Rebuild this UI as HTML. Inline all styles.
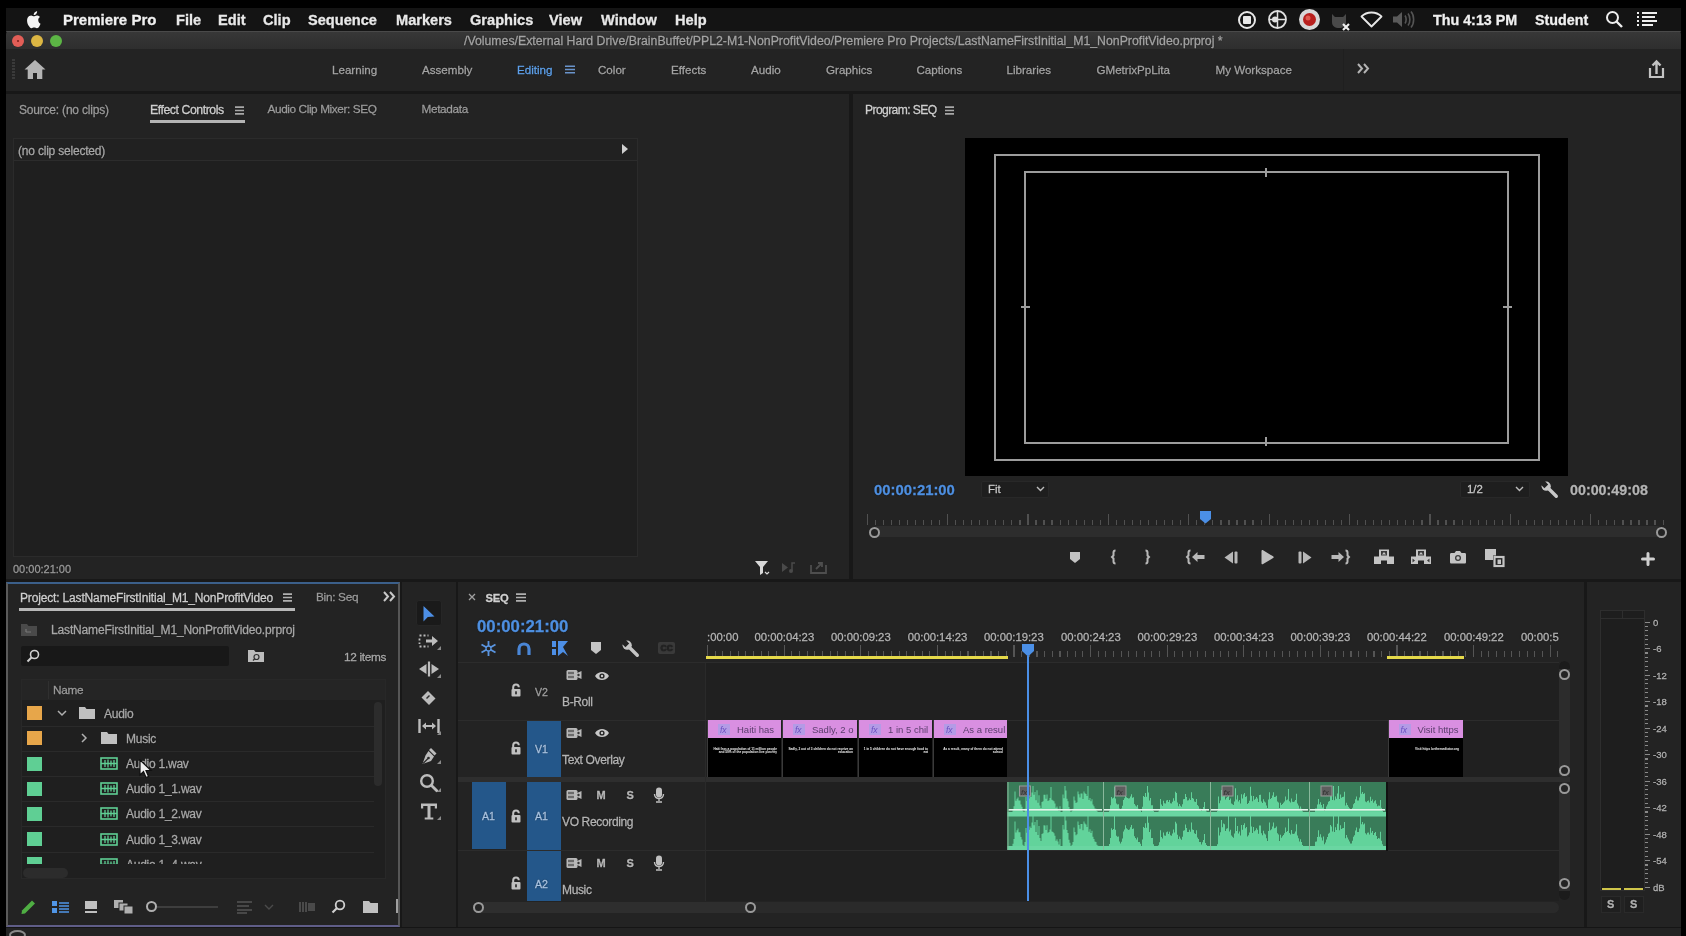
<!DOCTYPE html>
<html><head><meta charset="utf-8">
<style>
*{margin:0;padding:0;box-sizing:border-box}
html,body{width:1686px;height:936px;overflow:hidden;background:#000;font-family:"Liberation Sans",sans-serif;color:#a8a8a8}
#root{position:absolute;left:0;top:0;width:1686px;height:936px;will-change:transform}
.a{position:absolute;white-space:nowrap}
.t{line-height:1;-webkit-text-stroke:0.3px currentColor;text-shadow:0 0 1.2px rgba(0,0,0,.9)}
.p{-webkit-text-stroke:0.25px currentColor;letter-spacing:-0.35px}
</style></head><body><div id="root">
<div class="a" style="left:6px;top:8px;width:1675px;height:23px;background:#141414;"></div>
<div class="a" style="left:6px;top:31px;width:1675px;height:905px;background:#181818;"></div>
<div class="a" style="left:6px;top:31px;width:1675px;height:18px;background:linear-gradient(#383838,#2e2e2e);border-radius:4px 4px 0 0"></div>
<div class="a" style="left:6px;top:31px;width:1675px;height:1px;background:#4a4a4a;border-radius:4px 4px 0 0"></div>
<div class="a" style="left:6px;top:49px;width:1675px;height:42px;background:#232323;"></div>
<div class="a" style="left:6px;top:94px;width:843px;height:485px;background:#232323;"></div>
<div class="a" style="left:853px;top:94px;width:828px;height:485px;background:#232323;"></div>
<div class="a" style="left:6px;top:582px;width:394px;height:345px;background:#232323;"></div>
<div class="a" style="left:402px;top:582px;width:54px;height:345px;background:#232323;"></div>
<div class="a" style="left:458px;top:582px;width:1126px;height:345px;background:#232323;"></div>
<div class="a" style="left:1587px;top:582px;width:94px;height:345px;background:#232323;"></div>
<div class="a" style="left:6px;top:927px;width:1675px;height:9px;background:#232323;"></div>
<div class="a" style="left:6px;top:927px;width:1675px;height:1px;background:#151515;"></div>
<div class="a" style="left:9px;top:930px;width:17px;height:10px;background:transparent;border-radius:50%;border:2px solid #8a8a8a"></div>
<svg class="a" style="left:26px;top:10px" width="17" height="19" viewBox="0 0 17 19"><path fill="#f2f2f2" d="M12.2 10.1c0-2 1.7-3 1.8-3.1-1-1.4-2.5-1.6-3-1.6-1.3-.1-2.5.8-3.1.8-.7 0-1.6-.8-2.7-.8C3.8 5.4 2.5 6.2 1.8 7.5.3 10.1 1.4 14 2.9 16.1c.7 1 1.5 2.2 2.6 2.1 1 0 1.4-.7 2.7-.7 1.2 0 1.6.7 2.7.7 1.1 0 1.8-1 2.5-2 .8-1.2 1.1-2.3 1.1-2.4 0 0-2.3-.9-2.3-3.7zM10.2 3.9c.6-.7 1-1.7.9-2.7-.8 0-1.9.6-2.5 1.3-.5.6-1 1.6-.9 2.6.9.1 1.9-.5 2.5-1.2z"/></svg>
<div class="a t" style="left:63px;top:12px;font-size:15px;color:#f0f0f0;font-weight:bold">Premiere Pro</div>
<div class="a t" style="left:176px;top:12.5px;font-size:14.6px;color:#e8e8e8;font-weight:bold">File</div>
<div class="a t" style="left:218px;top:12.5px;font-size:14.6px;color:#e8e8e8;font-weight:bold">Edit</div>
<div class="a t" style="left:263px;top:12.5px;font-size:14.6px;color:#e8e8e8;font-weight:bold">Clip</div>
<div class="a t" style="left:308px;top:12.5px;font-size:14.6px;color:#e8e8e8;font-weight:bold">Sequence</div>
<div class="a t" style="left:396px;top:12.5px;font-size:14.6px;color:#e8e8e8;font-weight:bold">Markers</div>
<div class="a t" style="left:470px;top:12.5px;font-size:14.6px;color:#e8e8e8;font-weight:bold">Graphics</div>
<div class="a t" style="left:549px;top:12.5px;font-size:14.6px;color:#e8e8e8;font-weight:bold">View</div>
<div class="a t" style="left:601px;top:12.5px;font-size:14.6px;color:#e8e8e8;font-weight:bold">Window</div>
<div class="a t" style="left:675px;top:12.5px;font-size:14.6px;color:#e8e8e8;font-weight:bold">Help</div>
<svg class="a" style="left:1237px;top:10px" width="20" height="20" viewBox="0 0 20 20"><circle cx="10" cy="10" r="8" fill="none" stroke="#e8e8e8" stroke-width="2"/><rect x="6" y="6" width="8" height="8" rx="1" fill="#e8e8e8"/></svg>
<svg class="a" style="left:1267px;top:9px" width="21" height="21" viewBox="0 0 21 21"><circle cx="10.5" cy="10.5" r="8.5" fill="none" stroke="#e0e0e0" stroke-width="1.8"/><path d="M10.5 2v17M2 10.5h17" stroke="#e0e0e0" stroke-width="1.5"/><circle cx="8" cy="10.5" r="3" fill="#e0e0e0"/></svg>
<svg class="a" style="left:1298px;top:8px" width="23" height="23" viewBox="0 0 23 23"><circle cx="11.5" cy="11.5" r="10.5" fill="#d8d8d8"/><circle cx="11.5" cy="11.5" r="6.5" fill="#b8201e"/><circle cx="10" cy="10" r="2.5" fill="#e05a50"/></svg>
<svg class="a" style="left:1330px;top:10px" width="22" height="22" viewBox="0 0 22 22"><path d="M2 4l3 3h8l3-3v8c0 4-3 6-7 6s-7-2-7-6z" fill="#4a4a4a"/><path d="M13 14l6 6M19 14l-6 6" stroke="#f0f0f0" stroke-width="2.2"/></svg>
<svg class="a" style="left:1360px;top:11px" width="23" height="17" viewBox="0 0 23 17"><path d="M11.5 15.5L1.5 5.5C4 3 7.5 1.5 11.5 1.5s7.5 1.5 10 4z" fill="none" stroke="#e8e8e8" stroke-width="1.8" stroke-linejoin="round"/></svg>
<svg class="a" style="left:1391px;top:10px" width="26" height="19" viewBox="0 0 26 19"><path d="M2 6.5h4l5-4.5v15l-5-4.5H2z" fill="#5a5a5a"/><path d="M14 5.5c1.5 2 1.5 6 0 8M17 3.5c2.5 3 2.5 9 0 12M20 1.5c3.5 4 3.5 12 0 16" fill="none" stroke="#555" stroke-width="1.6"/></svg>
<div class="a t" style="left:1433px;top:12.5px;font-size:14.3px;color:#f0f0f0;font-weight:bold">Thu 4:13 PM</div>
<div class="a t" style="left:1535px;top:12.5px;font-size:14.3px;color:#f0f0f0;font-weight:bold">Student</div>
<svg class="a" style="left:1605px;top:10px" width="19" height="19" viewBox="0 0 19 19"><circle cx="7.5" cy="7.5" r="5.5" fill="none" stroke="#eee" stroke-width="2"/><path d="M11.5 11.5l5.5 5.5" stroke="#eee" stroke-width="2.4"/></svg>
<svg class="a" style="left:1636px;top:11px" width="22" height="16" viewBox="0 0 22 16"><path d="M1 2h2M6 2h15M1 6h2M6 6h13M1 10h2M6 10h15M1 14h2M6 14h11" stroke="#eee" stroke-width="2.2"/></svg>
<div class="a" style="left:12px;top:34.5px;width:12px;height:12px;background:#e25e57;border-radius:50%"></div>
<div class="a" style="left:17px;top:39.5px;width:2px;height:2px;background:#7a1d18;border-radius:50%"></div>
<div class="a" style="left:31px;top:34.5px;width:12px;height:12px;background:#dcb643;border-radius:50%"></div>
<div class="a" style="left:50px;top:34.5px;width:12px;height:12px;background:#5cb545;border-radius:50%"></div>
<div class="a t" style="left:464px;top:34.8px;font-size:12.3px;color:#a4a4a4;">/Volumes/External Hard Drive/BrainBuffet/PPL2-M1-NonProfitVideo/Premiere Pro Projects/LastNameFirstInitial_M1_NonProfitVideo.prproj *</div>
<div class="a" style="left:12px;top:59px;width:3px;height:21px;background:repeating-linear-gradient(#3a3a3a 0 2px,transparent 2px 3px);"></div>
<svg class="a" style="left:24px;top:59px" width="22" height="21" viewBox="0 0 22 21"><path d="M11 1L0.5 10.5h3.2V20h5.3v-6h4v6h5.3v-9.5h3.2z" fill="#b4b4b4"/></svg>
<div class="a t" style="left:332px;top:64px;font-size:11.6px;color:#a4a4a4;">Learning</div>
<div class="a t" style="left:422px;top:64px;font-size:11.6px;color:#a4a4a4;">Assembly</div>
<div class="a t" style="left:517px;top:64px;font-size:11.6px;color:#5ea0ea;">Editing</div>
<div class="a t" style="left:598px;top:64px;font-size:11.6px;color:#a4a4a4;">Color</div>
<div class="a t" style="left:671px;top:64px;font-size:11.6px;color:#a4a4a4;">Effects</div>
<div class="a t" style="left:751px;top:64px;font-size:11.6px;color:#a4a4a4;">Audio</div>
<div class="a t" style="left:826px;top:64px;font-size:11.6px;color:#a4a4a4;">Graphics</div>
<div class="a t" style="left:916.5px;top:64px;font-size:11.6px;color:#a4a4a4;">Captions</div>
<div class="a t" style="left:1006.5px;top:64px;font-size:11.6px;color:#a4a4a4;">Libraries</div>
<div class="a t" style="left:1096.5px;top:64px;font-size:11.6px;color:#a4a4a4;">GMetrixPpLita</div>
<div class="a t" style="left:1215.5px;top:64px;font-size:11.6px;color:#a4a4a4;">My Workspace</div>
<svg class="a" style="left:565px;top:65px" width="10" height="9" viewBox="0 0 10 9"><path d="M0 1.2h10M0 4.5h10M0 7.8h10" stroke="#6a94cc" stroke-width="1.5"/></svg>
<svg class="a" style="left:1357px;top:63px" width="13" height="11" viewBox="0 0 13 11"><path d="M1 1l4 4.5L1 10M7 1l4 4.5L7 10" fill="none" stroke="#b4b4b4" stroke-width="2"/></svg>
<div class="a" style="left:1343px;top:49px;width:1px;height:42px;background:#1f1f1f;"></div>
<svg class="a" style="left:1647px;top:59px" width="19" height="20" viewBox="0 0 19 20"><path d="M3 9v9h13V9" fill="none" stroke="#c4c4c4" stroke-width="2.2"/><path d="M9.5 15V3M5.5 6.5l4-4 4 4" fill="none" stroke="#c4c4c4" stroke-width="2.4"/></svg>
<div class="a t" style="left:19px;top:104px;font-size:12px;color:#9c9c9c;letter-spacing:-0.2px">Source: (no clips)</div>
<div class="a t" style="left:150px;top:104px;font-size:12.3px;color:#cfcfcf;letter-spacing:-0.45px">Effect Controls</div>
<svg class="a" style="left:235px;top:105.5px" width="9" height="9" viewBox="0 0 9 9"><path d="M0 1.2h9M0 4.5h9M0 7.8h9" stroke="#a8a8a8" stroke-width="1.7"/></svg>
<div class="a" style="left:149.5px;top:119.5px;width:95px;height:3px;background:#b4b4b4;"></div>
<div class="a t" style="left:267.5px;top:104px;font-size:11.8px;color:#9c9c9c;letter-spacing:-0.4px">Audio Clip Mixer: SEQ</div>
<div class="a t" style="left:421.5px;top:104px;font-size:11.8px;color:#9c9c9c;letter-spacing:-0.35px">Metadata</div>
<div class="a" style="left:13px;top:138px;width:625px;height:419px;background:#1f1f1f;border:1px solid #2b2b2b"></div>
<div class="a" style="left:14px;top:139px;width:623px;height:22px;background:#212121;border-bottom:1px solid #2c2c2c"></div>
<div class="a t" style="left:18px;top:145px;font-size:12px;color:#a8a8a8;letter-spacing:-0.2px">(no clip selected)</div>
<svg class="a" style="left:621px;top:144px" width="7" height="10" viewBox="0 0 7 10"><path d="M1 0l6 5-6 5z" fill="#cfcfcf"/></svg>
<div class="a t" style="left:13px;top:563.5px;font-size:11px;color:#9a9a9a;">00:00:21:00</div>
<svg class="a" style="left:754px;top:560px" width="16" height="16" viewBox="0 0 16 16"><path d="M1 1h13L9 7v6L6 15V7z" fill="#d8d8d8"/><path d="M11 12l2 2 2-2" fill="none" stroke="#d8d8d8" stroke-width="1.2"/></svg>
<svg class="a" style="left:781px;top:561px" width="16" height="13" viewBox="0 0 16 13"><path d="M1 2l6 4.5-6 4.5z" fill="#4a4a4a"/><path d="M11 10V2h3" fill="none" stroke="#4a4a4a" stroke-width="1.5"/><circle cx="10" cy="10" r="2" fill="#4a4a4a"/></svg>
<svg class="a" style="left:810px;top:560px" width="17" height="14" viewBox="0 0 17 14"><path d="M1 5v8h15V5" fill="none" stroke="#4e4e4e" stroke-width="1.8"/><path d="M6 9l5-5M8 3h4v4" fill="none" stroke="#4e4e4e" stroke-width="1.8"/></svg>
<div class="a t" style="left:865px;top:104px;font-size:12.1px;color:#cfcfcf;letter-spacing:-0.6px">Program: SEQ</div>
<svg class="a" style="left:945px;top:105.5px" width="9" height="9" viewBox="0 0 9 9"><path d="M0 1.2h9M0 4.5h9M0 7.8h9" stroke="#a8a8a8" stroke-width="1.7"/></svg>
<div class="a" style="left:965px;top:138px;width:603px;height:338px;background:#000;"></div>
<div class="a" style="left:994px;top:153.5px;width:545.5px;height:307px;background:transparent;border:2px solid #9c9c9c"></div>
<div class="a" style="left:1024px;top:170.5px;width:484.5px;height:273px;background:transparent;border:2px solid #9c9c9c"></div>
<div class="a" style="left:1265px;top:168px;width:2px;height:9px;background:#9c9c9c;"></div>
<div class="a" style="left:1265px;top:437px;width:2px;height:9px;background:#9c9c9c;"></div>
<div class="a" style="left:1021px;top:306px;width:9px;height:2px;background:#9c9c9c;"></div>
<div class="a" style="left:1503px;top:306px;width:9px;height:2px;background:#9c9c9c;"></div>
<div class="a t" style="left:874px;top:483px;font-size:14.85px;color:#4e8fe0;font-weight:bold">00:00:21:00</div>
<div class="a" style="left:981px;top:481px;width:68px;height:17px;background:#1e1e1e;border:1px solid #282828;border-radius:2px"></div>
<div class="a t" style="left:988px;top:484px;font-size:11.4px;color:#c8c8c8;">Fit</div>
<svg class="a" style="left:1036px;top:486px" width="9" height="6" viewBox="0 0 9 6"><path d="M1 1l3.5 3.5L8 1" fill="none" stroke="#bdbdbd" stroke-width="1.4"/></svg>
<div class="a" style="left:1460px;top:481px;width:70px;height:17px;background:#1e1e1e;border:1px solid #282828;border-radius:2px"></div>
<div class="a t" style="left:1467px;top:484px;font-size:11.4px;color:#c8c8c8;">1/2</div>
<svg class="a" style="left:1515px;top:486px" width="9" height="6" viewBox="0 0 9 6"><path d="M1 1l3.5 3.5L8 1" fill="none" stroke="#bdbdbd" stroke-width="1.4"/></svg>
<svg class="a" style="left:1541px;top:481px" width="18" height="18" viewBox="0 0 18 18"><path d="M5.5 5.5L15.3 15.3" stroke="#c8c8c8" stroke-width="3.4" stroke-linecap="round"/><circle cx="5.2" cy="5.2" r="4.6" fill="#c8c8c8"/><path d="M3.2 -0.6L7.2 3.4 3.4 7.2 -0.6 3.2z" fill="#232323"/></svg>
<div class="a t" style="left:1570px;top:483.2px;font-size:14.3px;color:#b4b4b4;font-weight:bold">00:00:49:08</div>
<div class="a" style="left:866.5px;top:514px;width:1.3px;height:11px;background:#505050;"></div>
<div class="a" style="left:874.5px;top:519.5px;width:1.3px;height:5.5px;background:#505050;"></div>
<div class="a" style="left:882.6px;top:519.5px;width:1.3px;height:5.5px;background:#505050;"></div>
<div class="a" style="left:890.6px;top:519.5px;width:1.3px;height:5.5px;background:#505050;"></div>
<div class="a" style="left:898.7px;top:519.5px;width:1.3px;height:5.5px;background:#505050;"></div>
<div class="a" style="left:906.7px;top:519.5px;width:1.3px;height:5.5px;background:#505050;"></div>
<div class="a" style="left:914.7px;top:519.5px;width:1.3px;height:5.5px;background:#505050;"></div>
<div class="a" style="left:922.8px;top:519.5px;width:1.3px;height:5.5px;background:#505050;"></div>
<div class="a" style="left:930.8px;top:519.5px;width:1.3px;height:5.5px;background:#505050;"></div>
<div class="a" style="left:938.9px;top:519.5px;width:1.3px;height:5.5px;background:#505050;"></div>
<div class="a" style="left:946.9px;top:514px;width:1.3px;height:11px;background:#505050;"></div>
<div class="a" style="left:954.9px;top:519.5px;width:1.3px;height:5.5px;background:#505050;"></div>
<div class="a" style="left:963.0px;top:519.5px;width:1.3px;height:5.5px;background:#505050;"></div>
<div class="a" style="left:971.0px;top:519.5px;width:1.3px;height:5.5px;background:#505050;"></div>
<div class="a" style="left:979.1px;top:519.5px;width:1.3px;height:5.5px;background:#505050;"></div>
<div class="a" style="left:987.1px;top:519.5px;width:1.3px;height:5.5px;background:#505050;"></div>
<div class="a" style="left:995.1px;top:519.5px;width:1.3px;height:5.5px;background:#505050;"></div>
<div class="a" style="left:1003.2px;top:519.5px;width:1.3px;height:5.5px;background:#505050;"></div>
<div class="a" style="left:1011.2px;top:519.5px;width:1.3px;height:5.5px;background:#505050;"></div>
<div class="a" style="left:1019.3px;top:519.5px;width:1.3px;height:5.5px;background:#505050;"></div>
<div class="a" style="left:1027.3px;top:514px;width:1.3px;height:11px;background:#505050;"></div>
<div class="a" style="left:1035.3px;top:519.5px;width:1.3px;height:5.5px;background:#505050;"></div>
<div class="a" style="left:1043.4px;top:519.5px;width:1.3px;height:5.5px;background:#505050;"></div>
<div class="a" style="left:1051.4px;top:519.5px;width:1.3px;height:5.5px;background:#505050;"></div>
<div class="a" style="left:1059.5px;top:519.5px;width:1.3px;height:5.5px;background:#505050;"></div>
<div class="a" style="left:1067.5px;top:519.5px;width:1.3px;height:5.5px;background:#505050;"></div>
<div class="a" style="left:1075.5px;top:519.5px;width:1.3px;height:5.5px;background:#505050;"></div>
<div class="a" style="left:1083.6px;top:519.5px;width:1.3px;height:5.5px;background:#505050;"></div>
<div class="a" style="left:1091.6px;top:519.5px;width:1.3px;height:5.5px;background:#505050;"></div>
<div class="a" style="left:1099.7px;top:519.5px;width:1.3px;height:5.5px;background:#505050;"></div>
<div class="a" style="left:1107.7px;top:514px;width:1.3px;height:11px;background:#505050;"></div>
<div class="a" style="left:1115.7px;top:519.5px;width:1.3px;height:5.5px;background:#505050;"></div>
<div class="a" style="left:1123.8px;top:519.5px;width:1.3px;height:5.5px;background:#505050;"></div>
<div class="a" style="left:1131.8px;top:519.5px;width:1.3px;height:5.5px;background:#505050;"></div>
<div class="a" style="left:1139.9px;top:519.5px;width:1.3px;height:5.5px;background:#505050;"></div>
<div class="a" style="left:1147.9px;top:519.5px;width:1.3px;height:5.5px;background:#505050;"></div>
<div class="a" style="left:1155.9px;top:519.5px;width:1.3px;height:5.5px;background:#505050;"></div>
<div class="a" style="left:1164.0px;top:519.5px;width:1.3px;height:5.5px;background:#505050;"></div>
<div class="a" style="left:1172.0px;top:519.5px;width:1.3px;height:5.5px;background:#505050;"></div>
<div class="a" style="left:1180.1px;top:519.5px;width:1.3px;height:5.5px;background:#505050;"></div>
<div class="a" style="left:1188.1px;top:514px;width:1.3px;height:11px;background:#505050;"></div>
<div class="a" style="left:1196.1px;top:519.5px;width:1.3px;height:5.5px;background:#505050;"></div>
<div class="a" style="left:1204.2px;top:519.5px;width:1.3px;height:5.5px;background:#505050;"></div>
<div class="a" style="left:1212.2px;top:519.5px;width:1.3px;height:5.5px;background:#505050;"></div>
<div class="a" style="left:1220.3px;top:519.5px;width:1.3px;height:5.5px;background:#505050;"></div>
<div class="a" style="left:1228.3px;top:519.5px;width:1.3px;height:5.5px;background:#505050;"></div>
<div class="a" style="left:1236.3px;top:519.5px;width:1.3px;height:5.5px;background:#505050;"></div>
<div class="a" style="left:1244.4px;top:519.5px;width:1.3px;height:5.5px;background:#505050;"></div>
<div class="a" style="left:1252.4px;top:519.5px;width:1.3px;height:5.5px;background:#505050;"></div>
<div class="a" style="left:1260.5px;top:519.5px;width:1.3px;height:5.5px;background:#505050;"></div>
<div class="a" style="left:1268.5px;top:514px;width:1.3px;height:11px;background:#505050;"></div>
<div class="a" style="left:1276.5px;top:519.5px;width:1.3px;height:5.5px;background:#505050;"></div>
<div class="a" style="left:1284.6px;top:519.5px;width:1.3px;height:5.5px;background:#505050;"></div>
<div class="a" style="left:1292.6px;top:519.5px;width:1.3px;height:5.5px;background:#505050;"></div>
<div class="a" style="left:1300.7px;top:519.5px;width:1.3px;height:5.5px;background:#505050;"></div>
<div class="a" style="left:1308.7px;top:519.5px;width:1.3px;height:5.5px;background:#505050;"></div>
<div class="a" style="left:1316.7px;top:519.5px;width:1.3px;height:5.5px;background:#505050;"></div>
<div class="a" style="left:1324.8px;top:519.5px;width:1.3px;height:5.5px;background:#505050;"></div>
<div class="a" style="left:1332.8px;top:519.5px;width:1.3px;height:5.5px;background:#505050;"></div>
<div class="a" style="left:1340.9px;top:519.5px;width:1.3px;height:5.5px;background:#505050;"></div>
<div class="a" style="left:1348.9px;top:514px;width:1.3px;height:11px;background:#505050;"></div>
<div class="a" style="left:1356.9px;top:519.5px;width:1.3px;height:5.5px;background:#505050;"></div>
<div class="a" style="left:1365.0px;top:519.5px;width:1.3px;height:5.5px;background:#505050;"></div>
<div class="a" style="left:1373.0px;top:519.5px;width:1.3px;height:5.5px;background:#505050;"></div>
<div class="a" style="left:1381.1px;top:519.5px;width:1.3px;height:5.5px;background:#505050;"></div>
<div class="a" style="left:1389.1px;top:519.5px;width:1.3px;height:5.5px;background:#505050;"></div>
<div class="a" style="left:1397.1px;top:519.5px;width:1.3px;height:5.5px;background:#505050;"></div>
<div class="a" style="left:1405.2px;top:519.5px;width:1.3px;height:5.5px;background:#505050;"></div>
<div class="a" style="left:1413.2px;top:519.5px;width:1.3px;height:5.5px;background:#505050;"></div>
<div class="a" style="left:1421.3px;top:519.5px;width:1.3px;height:5.5px;background:#505050;"></div>
<div class="a" style="left:1429.3px;top:514px;width:1.3px;height:11px;background:#505050;"></div>
<div class="a" style="left:1437.3px;top:519.5px;width:1.3px;height:5.5px;background:#505050;"></div>
<div class="a" style="left:1445.4px;top:519.5px;width:1.3px;height:5.5px;background:#505050;"></div>
<div class="a" style="left:1453.4px;top:519.5px;width:1.3px;height:5.5px;background:#505050;"></div>
<div class="a" style="left:1461.5px;top:519.5px;width:1.3px;height:5.5px;background:#505050;"></div>
<div class="a" style="left:1469.5px;top:519.5px;width:1.3px;height:5.5px;background:#505050;"></div>
<div class="a" style="left:1477.5px;top:519.5px;width:1.3px;height:5.5px;background:#505050;"></div>
<div class="a" style="left:1485.6px;top:519.5px;width:1.3px;height:5.5px;background:#505050;"></div>
<div class="a" style="left:1493.6px;top:519.5px;width:1.3px;height:5.5px;background:#505050;"></div>
<div class="a" style="left:1501.7px;top:519.5px;width:1.3px;height:5.5px;background:#505050;"></div>
<div class="a" style="left:1509.7px;top:514px;width:1.3px;height:11px;background:#505050;"></div>
<div class="a" style="left:1517.7px;top:519.5px;width:1.3px;height:5.5px;background:#505050;"></div>
<div class="a" style="left:1525.8px;top:519.5px;width:1.3px;height:5.5px;background:#505050;"></div>
<div class="a" style="left:1533.8px;top:519.5px;width:1.3px;height:5.5px;background:#505050;"></div>
<div class="a" style="left:1541.9px;top:519.5px;width:1.3px;height:5.5px;background:#505050;"></div>
<div class="a" style="left:1549.9px;top:519.5px;width:1.3px;height:5.5px;background:#505050;"></div>
<div class="a" style="left:1557.9px;top:519.5px;width:1.3px;height:5.5px;background:#505050;"></div>
<div class="a" style="left:1566.0px;top:519.5px;width:1.3px;height:5.5px;background:#505050;"></div>
<div class="a" style="left:1574.0px;top:519.5px;width:1.3px;height:5.5px;background:#505050;"></div>
<div class="a" style="left:1582.1px;top:519.5px;width:1.3px;height:5.5px;background:#505050;"></div>
<div class="a" style="left:1590.1px;top:514px;width:1.3px;height:11px;background:#505050;"></div>
<div class="a" style="left:1598.1px;top:519.5px;width:1.3px;height:5.5px;background:#505050;"></div>
<div class="a" style="left:1606.2px;top:519.5px;width:1.3px;height:5.5px;background:#505050;"></div>
<div class="a" style="left:1614.2px;top:519.5px;width:1.3px;height:5.5px;background:#505050;"></div>
<div class="a" style="left:1622.3px;top:519.5px;width:1.3px;height:5.5px;background:#505050;"></div>
<div class="a" style="left:1630.3px;top:519.5px;width:1.3px;height:5.5px;background:#505050;"></div>
<div class="a" style="left:1638.3px;top:519.5px;width:1.3px;height:5.5px;background:#505050;"></div>
<div class="a" style="left:1646.4px;top:519.5px;width:1.3px;height:5.5px;background:#505050;"></div>
<div class="a" style="left:1654.4px;top:519.5px;width:1.3px;height:5.5px;background:#505050;"></div>
<div class="a" style="left:1662.5px;top:519.5px;width:1.3px;height:5.5px;background:#505050;"></div>
<div class="a" style="left:873px;top:526px;width:789px;height:11px;background:#2d2d2d;border-radius:5px"></div>
<div class="a" style="left:868.5px;top:526.5px;width:11px;height:11px;background:#232323;border-radius:50%;border:2px solid #9a9a9a"></div>
<div class="a" style="left:1655.5px;top:526.5px;width:11px;height:11px;background:#232323;border-radius:50%;border:2px solid #9a9a9a"></div>
<svg class="a" style="left:1199px;top:510px" width="13" height="14" viewBox="0 0 13 14"><path d="M1 1h11v8l-5.5 4.5L1 9z" fill="#4b8fe6"/></svg>
<svg class="a" style="left:1069px;top:551px" width="12" height="13" viewBox="0 0 12 13"><path d="M1 1h10v7l-5 4-5-4z" fill="#c4c4c4"/></svg>
<svg class="a" style="left:1109px;top:549px" width="10" height="16" viewBox="0 0 10 16"><path d="M6.5 1.5C5 1.5 4.5 2.2 4.5 3.5v3L3 8l1.5 1.5v3c0 1.3.5 2 2 2" fill="none" stroke="#b8b8b8" stroke-width="2"/></svg>
<svg class="a" style="left:1142px;top:549px" width="10" height="16" viewBox="0 0 10 16"><path d="M3.5 1.5C5 1.5 5.5 2.2 5.5 3.5v3L7 8l-1.5 1.5v3c0 1.3-.5 2-2 2" fill="none" stroke="#b8b8b8" stroke-width="2"/></svg>
<svg class="a" style="left:1185px;top:549px" width="21" height="16" viewBox="0 0 21 16"><path d="M5.5 1.5C4 1.5 3.5 2.2 3.5 3.5v3L2 8l1.5 1.5v3c0 1.3.5 2 2 2" fill="none" stroke="#b8b8b8" stroke-width="2"/><path d="M7 8l5.5-5v3h7v4h-7v3z" fill="#b8b8b8"/></svg>
<svg class="a" style="left:1223px;top:550px" width="16" height="15" viewBox="0 0 16 15"><path d="M1.5 7.5L10 1.5v12z" fill="#b8b8b8"/><rect x="11.5" y="1.5" width="3" height="12" rx="1" fill="#b8b8b8"/></svg>
<svg class="a" style="left:1259px;top:549px" width="16" height="16" viewBox="0 0 16 16"><path d="M2.5 2.2c0-1 .8-1.4 1.6-.9l10 6c.8.5.8 1.3 0 1.8l-10 6c-.8.5-1.6.1-1.6-.9z" fill="#c0c0c0"/></svg>
<svg class="a" style="left:1297px;top:550px" width="16" height="15" viewBox="0 0 16 15"><rect x="1.5" y="1.5" width="3" height="12" rx="1" fill="#b8b8b8"/><path d="M14.5 7.5L6 1.5v12z" fill="#b8b8b8"/></svg>
<svg class="a" style="left:1330px;top:549px" width="21" height="16" viewBox="0 0 21 16"><path d="M15.5 1.5c1.5 0 2 .7 2 2v3L19 8l-1.5 1.5v3c0 1.3-.5 2-2 2" fill="none" stroke="#b8b8b8" stroke-width="2"/><path d="M14 8L8.5 3v3h-7v4h7v3z" fill="#b8b8b8"/></svg>
<svg class="a" style="left:1373px;top:548px" width="22" height="17" viewBox="0 0 22 17"><path d="M6 1.5h10v7h5v7.5h-7v-3.5h-6v3.5H1V8.5h5z" fill="#c4c4c4"/><rect x="8" y="3" width="6" height="4.5" fill="#3a3a3a"/><path d="M9 6.5l2-2.5 2 2.5z" fill="#c4c4c4"/></svg>
<svg class="a" style="left:1410px;top:548px" width="22" height="17" viewBox="0 0 22 17"><path d="M6 1.5h10v7h5v7.5h-7v-3.5h-6v3.5H1V8.5h5z" fill="#c4c4c4"/><rect x="8" y="3" width="6" height="4.5" fill="#3a3a3a"/><path d="M9 6.5l2-2.5 2 2.5z" fill="#c4c4c4"/><path d="M2.5 10.5l2.5 2-2.5 2zM19.5 10.5l-2.5 2 2.5 2z" fill="#3a3a3a"/></svg>
<svg class="a" style="left:1449px;top:550px" width="18" height="14" viewBox="0 0 18 14"><path d="M1 4.5c0-1 .5-1.5 1.5-1.5h3L7 1h4l1.5 2h3c1 0 1.5.5 1.5 1.5V12c0 1-.5 1.5-1.5 1.5h-13C1.5 13.5 1 13 1 12z" fill="#c4c4c4"/><circle cx="9" cy="8" r="3" fill="#3a3a3a"/><circle cx="9" cy="8" r="1.7" fill="#c4c4c4"/></svg>
<svg class="a" style="left:1484px;top:548px" width="22" height="20" viewBox="0 0 22 20"><rect x="1" y="1" width="11" height="11" fill="#c4c4c4"/><rect x="9" y="7.5" width="12" height="12" fill="#232323"/><rect x="10.5" y="9" width="9" height="9" fill="none" stroke="#c4c4c4" stroke-width="2.2"/><rect x="13.5" y="11.5" width="3.5" height="4.5" fill="#c4c4c4"/></svg>
<svg class="a" style="left:1641px;top:552px" width="14" height="14" viewBox="0 0 14 14"><path d="M7 1.5v11M1.5 7h11" stroke="#d0d0d0" stroke-width="3" stroke-linecap="round"/></svg>
<div class="a" style="left:6px;top:582px;width:394px;height:345px;background:transparent;border:2px solid #565656;border-top-color:#3b5f8a;border-bottom-color:#5f5d88;border-left-color:#5a5a5a"></div>
<div class="a t" style="left:20px;top:592px;font-size:12px;color:#cfcfcf;letter-spacing:-0.16px">Project: LastNameFirstInitial_M1_NonProfitVideo</div>
<svg class="a" style="left:283px;top:593px" width="9" height="9" viewBox="0 0 9 9"><path d="M0 1.2h9M0 4.5h9M0 7.8h9" stroke="#b0b0b0" stroke-width="1.7"/></svg>
<div class="a" style="left:18.5px;top:608px;width:276px;height:2.5px;background:#b8b8b8;"></div>
<div class="a t" style="left:316px;top:592px;font-size:11.8px;color:#9c9c9c;letter-spacing:-0.3px">Bin: Seq</div>
<svg class="a" style="left:383px;top:591px" width="13" height="11" viewBox="0 0 13 11"><path d="M1 1l4 4.5L1 10M7 1l4 4.5L7 10" fill="none" stroke="#c8c8c8" stroke-width="2"/></svg>
<svg class="a" style="left:20px;top:622px" width="18" height="15" viewBox="0 0 18 15"><path d="M1 2h6l1.5 2H17v10H1z" fill="#4a4a4a"/><path d="M6 10h5M6 10V7" stroke="#777" stroke-width="1.2"/></svg>
<div class="a t" style="left:51px;top:623.5px;font-size:12px;color:#a8a8a8;letter-spacing:-0.15px">LastNameFirstInitial_M1_NonProfitVideo.prproj</div>
<div class="a" style="left:21px;top:646px;width:208px;height:20px;background:#181818;border-radius:2px"></div>
<svg class="a" style="left:26px;top:649px" width="14" height="14" viewBox="0 0 14 14"><circle cx="8.5" cy="5.5" r="4" fill="none" stroke="#d0d0d0" stroke-width="1.6"/><path d="M5.5 8.5L1.5 12.5" stroke="#d0d0d0" stroke-width="2"/></svg>
<svg class="a" style="left:247px;top:648px" width="18" height="15" viewBox="0 0 18 15"><path d="M1 2h6l1.5 2H17v10H1z" fill="#bcbcbc"/><circle cx="9.5" cy="9" r="2.5" fill="none" stroke="#303030" stroke-width="1.2"/><path d="M8 10.5l-2 2" stroke="#303030" stroke-width="1.2"/></svg>
<div class="a t" style="left:344px;top:651.5px;font-size:11.8px;color:#a8a8a8;letter-spacing:-0.3px">12 items</div>
<div class="a" style="left:21px;top:679px;width:365px;height:200px;background:#1f1f1f;border:1px solid #282828"></div>
<div class="a" style="left:22px;top:680px;width:363px;height:20px;background:#252525;"></div>
<div class="a" style="left:48px;top:681px;width:1px;height:18px;background:#303030;"></div>
<div class="a t" style="left:53px;top:685px;font-size:11.8px;color:#9c9c9c;letter-spacing:-0.3px">Name</div>
<div class="a" style="left:22px;top:725.5px;width:352px;height:1px;background:#2a2a2a;"></div>
<div class="a" style="left:27px;top:706.1px;width:15px;height:14px;background:#e7a64a;"></div>
<svg class="a" style="left:57px;top:709.6px" width="10" height="7" viewBox="0 0 10 7"><path d="M1 1l4 4 4-4" fill="none" stroke="#b0b0b0" stroke-width="1.5"/></svg>
<svg class="a" style="left:79px;top:706.1px" width="16" height="13" viewBox="0 0 16 13"><path d="M0 1h6l1.5 2H16v10H0z" fill="#c0c0c0"/></svg>
<div class="a t" style="left:104px;top:707.5px;font-size:12px;color:#a8a8a8;letter-spacing:-0.25px">Audio</div>
<div class="a" style="left:22px;top:750.7px;width:352px;height:1px;background:#2a2a2a;"></div>
<div class="a" style="left:27px;top:731.3px;width:15px;height:14px;background:#e7a64a;"></div>
<svg class="a" style="left:80.5px;top:733.3px" width="7" height="10" viewBox="0 0 7 10"><path d="M1 1l4 4-4 4" fill="none" stroke="#b0b0b0" stroke-width="1.5"/></svg>
<svg class="a" style="left:101px;top:731.3px" width="16" height="13" viewBox="0 0 16 13"><path d="M0 1h6l1.5 2H16v10H0z" fill="#c0c0c0"/></svg>
<div class="a t" style="left:126px;top:732.7px;font-size:12px;color:#a8a8a8;letter-spacing:-0.25px">Music</div>
<div class="a" style="left:22px;top:775.9px;width:352px;height:1px;background:#2a2a2a;"></div>
<div class="a" style="left:27px;top:756.5px;width:15px;height:14px;background:#5fcf94;"></div>
<svg class="a" style="left:100px;top:757.0px" width="18" height="13" viewBox="0 0 18 13"><rect x="1" y="1" width="16" height="11" fill="none" stroke="#5fcf94" stroke-width="1.6"/><path d="M1 6.5h16M5 3v7M8 2.5v8M11 3.5v6M14 3v7" stroke="#5fcf94" stroke-width="1.3"/></svg>
<div class="a t" style="left:126px;top:757.9px;font-size:12px;color:#a8a8a8;letter-spacing:-0.25px">Audio 1.wav</div>
<div class="a" style="left:22px;top:801.1px;width:352px;height:1px;background:#2a2a2a;"></div>
<div class="a" style="left:27px;top:781.7px;width:15px;height:14px;background:#5fcf94;"></div>
<svg class="a" style="left:100px;top:782.2px" width="18" height="13" viewBox="0 0 18 13"><rect x="1" y="1" width="16" height="11" fill="none" stroke="#5fcf94" stroke-width="1.6"/><path d="M1 6.5h16M5 3v7M8 2.5v8M11 3.5v6M14 3v7" stroke="#5fcf94" stroke-width="1.3"/></svg>
<div class="a t" style="left:126px;top:783.1px;font-size:12px;color:#a8a8a8;letter-spacing:-0.25px">Audio 1_1.wav</div>
<div class="a" style="left:22px;top:826.3px;width:352px;height:1px;background:#2a2a2a;"></div>
<div class="a" style="left:27px;top:806.9px;width:15px;height:14px;background:#5fcf94;"></div>
<svg class="a" style="left:100px;top:807.4px" width="18" height="13" viewBox="0 0 18 13"><rect x="1" y="1" width="16" height="11" fill="none" stroke="#5fcf94" stroke-width="1.6"/><path d="M1 6.5h16M5 3v7M8 2.5v8M11 3.5v6M14 3v7" stroke="#5fcf94" stroke-width="1.3"/></svg>
<div class="a t" style="left:126px;top:808.3px;font-size:12px;color:#a8a8a8;letter-spacing:-0.25px">Audio 1_2.wav</div>
<div class="a" style="left:22px;top:851.5px;width:352px;height:1px;background:#2a2a2a;"></div>
<div class="a" style="left:27px;top:832.1px;width:15px;height:14px;background:#5fcf94;"></div>
<svg class="a" style="left:100px;top:832.6px" width="18" height="13" viewBox="0 0 18 13"><rect x="1" y="1" width="16" height="11" fill="none" stroke="#5fcf94" stroke-width="1.6"/><path d="M1 6.5h16M5 3v7M8 2.5v8M11 3.5v6M14 3v7" stroke="#5fcf94" stroke-width="1.3"/></svg>
<div class="a t" style="left:126px;top:833.5px;font-size:12px;color:#a8a8a8;letter-spacing:-0.25px">Audio 1_3.wav</div>
<div class="a" style="left:22px;top:876.7px;width:352px;height:1px;background:#2a2a2a;"></div>
<div class="a" style="left:27px;top:857.3px;width:15px;height:14px;background:#5fcf94;"></div>
<svg class="a" style="left:100px;top:857.8px" width="18" height="13" viewBox="0 0 18 13"><rect x="1" y="1" width="16" height="11" fill="none" stroke="#5fcf94" stroke-width="1.6"/><path d="M1 6.5h16M5 3v7M8 2.5v8M11 3.5v6M14 3v7" stroke="#5fcf94" stroke-width="1.3"/></svg>
<div class="a t" style="left:126px;top:858.7px;font-size:12px;color:#a8a8a8;letter-spacing:-0.25px">Audio 1_4.wav</div>
<div class="a" style="left:22px;top:864px;width:363px;height:14px;background:#1f1f1f;"></div>
<div class="a" style="left:23px;top:868px;width:45px;height:10px;background:#2c2c2c;border-radius:5px"></div>
<div class="a" style="left:374px;top:702px;width:8px;height:84px;background:#2c2c2c;border-radius:4px"></div>
<svg class="a" style="left:139px;top:759px" width="14" height="20" viewBox="0 0 14 20"><path d="M1 1v15l3.5-3.5 2.5 6 2.5-1-2.5-6H12z" fill="#f0f0f0" stroke="#111" stroke-width="1.2"/></svg>
<svg class="a" style="left:20px;top:899px" width="17" height="16" viewBox="0 0 17 16"><path d="M12 1.5l3 3L5 14.5 1.5 15l.5-3.5z" fill="#4fae43"/></svg>
<svg class="a" style="left:51px;top:900px" width="19" height="14" viewBox="0 0 19 14"><rect x="1" y="1" width="5" height="5" fill="#5095e6"/><rect x="1" y="8" width="5" height="5" fill="#5095e6"/><path d="M8 3h10M8 6h10M8 9h10M8 12h10" stroke="#5095e6" stroke-width="1.4"/></svg>
<svg class="a" style="left:84px;top:900px" width="15" height="14" viewBox="0 0 15 14"><rect x="1" y="1" width="12" height="8" fill="#c0c0c0"/><path d="M1 12h12" stroke="#c0c0c0" stroke-width="2"/></svg>
<svg class="a" style="left:113px;top:899px" width="21" height="16" viewBox="0 0 21 16"><rect x="1" y="1" width="9" height="8" fill="#b0b0b0"/><rect x="6" y="4" width="9" height="8" fill="#b0b0b0" stroke="#232323"/><rect x="11" y="7" width="9" height="8" fill="#b0b0b0" stroke="#232323"/></svg>
<div class="a" style="left:146px;top:901px;width:11px;height:11px;background:transparent;border-radius:50%;border:2px solid #b0b0b0"></div>
<div class="a" style="left:157px;top:906px;width:61px;height:2px;background:#3e3e3e;"></div>
<svg class="a" style="left:236px;top:900px" width="17" height="14" viewBox="0 0 17 14"><path d="M1 2h15M1 6h12M1 10h15M1 13h10" stroke="#555" stroke-width="1.5"/></svg>
<svg class="a" style="left:264px;top:904px" width="10" height="6" viewBox="0 0 10 6"><path d="M1 1l4 4 4-4" fill="none" stroke="#4a4a4a" stroke-width="1.4"/></svg>
<svg class="a" style="left:299px;top:901px" width="17" height="12" viewBox="0 0 17 12"><path d="M1 1v10M4 1v10M7 1v10" stroke="#4a4a4a" stroke-width="2"/><rect x="9" y="2" width="7" height="8" fill="#4a4a4a"/></svg>
<svg class="a" style="left:331px;top:899px" width="15" height="15" viewBox="0 0 15 15"><circle cx="9" cy="6" r="4.3" fill="none" stroke="#d0d0d0" stroke-width="1.8"/><path d="M6 9l-4.5 4.5" stroke="#d0d0d0" stroke-width="2.2"/></svg>
<svg class="a" style="left:362px;top:900px" width="17" height="14" viewBox="0 0 17 14"><path d="M1 1h6l1.5 2H16v10H1z" fill="#c0c0c0"/></svg>
<div class="a" style="left:396px;top:899px;width:2px;height:14px;background:#a0a0a0;"></div>
<div class="a" style="left:416px;top:600px;width:26px;height:26px;background:#1a1a1a;border-radius:3px;border:1px solid #262626"></div>
<svg class="a" style="left:421px;top:604px" width="16" height="20" viewBox="0 0 16 20"><path d="M2.5 2v15.5l4.3-4.6 6.7-.4z" fill="#4d8fe6"/></svg>
<svg class="a" style="left:418px;top:633px" width="22" height="16" viewBox="0 0 22 16"><path d="M1.5 2.5h2M5.5 2.5h2M9.5 2.5h1M1.5 13.5h2M5.5 13.5h2M9.5 13.5h1M1.5 5.5v2M1.5 9.5v1.5" stroke="#bcbcbc" stroke-width="1.8"/><path d="M8 6.5h6V3l6 5-6 5V9.5H8z" fill="#bcbcbc"/></svg>
<svg class="a" style="left:437px;top:646px" width="4" height="4" viewBox="0 0 4 4"><path d="M4 0v4H0z" fill="#8a8a8a"/></svg>
<svg class="a" style="left:418px;top:660px" width="22" height="18" viewBox="0 0 22 18"><path d="M11 1.5v15" stroke="#bcbcbc" stroke-width="2.2"/><path d="M1 9l7.5-5v10zM21 9l-7.5-5v10z" fill="#bcbcbc"/></svg>
<svg class="a" style="left:437px;top:674px" width="4" height="4" viewBox="0 0 4 4"><path d="M4 0v4H0z" fill="#8a8a8a"/></svg>
<svg class="a" style="left:419px;top:689px" width="20" height="18" viewBox="0 0 20 18"><path d="M2.5 8.5L9 2l7.5 7.5-6.5 6.5z" fill="#bcbcbc"/><path d="M7.5 9.5l3-3" stroke="#2a2a2a" stroke-width="1.4"/></svg>
<svg class="a" style="left:417px;top:717px" width="24" height="18" viewBox="0 0 24 18"><path d="M2.5 2v14M21.5 2v14" stroke="#bcbcbc" stroke-width="2.4"/><path d="M6 9h12" stroke="#bcbcbc" stroke-width="2"/><path d="M5 9l4-3.5v7zM19 9l-4-3.5v7z" fill="#bcbcbc"/></svg>
<svg class="a" style="left:437px;top:731px" width="4" height="4" viewBox="0 0 4 4"><path d="M4 0v4H0z" fill="#8a8a8a"/></svg>
<svg class="a" style="left:419px;top:746px" width="20" height="19" viewBox="0 0 20 19"><path d="M12 2l5.5 5.5-2 2-5.5-5.5z" fill="#bcbcbc"/><path d="M9.5 5L15 10.5l-3 4.5-8.5 3 3-8.5z" fill="#bcbcbc"/><path d="M4 17.5l5-5" stroke="#2a2a2a" stroke-width="1.2"/><circle cx="9.5" cy="12" r="1.3" fill="#2a2a2a"/></svg>
<svg class="a" style="left:437px;top:760px" width="4" height="4" viewBox="0 0 4 4"><path d="M4 0v4H0z" fill="#8a8a8a"/></svg>
<svg class="a" style="left:419px;top:773px" width="20" height="20" viewBox="0 0 20 20"><circle cx="8" cy="8" r="5.8" fill="none" stroke="#bcbcbc" stroke-width="2.4"/><path d="M12.5 12.5l5.3 5.3" stroke="#bcbcbc" stroke-width="2.8" stroke-linecap="round"/></svg>
<svg class="a" style="left:437px;top:788px" width="4" height="4" viewBox="0 0 4 4"><path d="M4 0v4H0z" fill="#8a8a8a"/></svg>
<svg class="a" style="left:420px;top:802px" width="18" height="18" viewBox="0 0 18 18"><path d="M1 1.5h16v5h-2.2V4H10.5v11.5h2.8v2H4.7v-2h2.8V4H3.2v2.5H1z" fill="#bcbcbc"/></svg>
<svg class="a" style="left:437px;top:816px" width="4" height="4" viewBox="0 0 4 4"><path d="M4 0v4H0z" fill="#8a8a8a"/></svg>
<svg class="a" style="left:468px;top:593px" width="8" height="8" viewBox="0 0 8 8"><path d="M1 1l6 6M7 1L1 7" stroke="#a0a0a0" stroke-width="1.3"/></svg>
<div class="a t" style="left:485.5px;top:592.5px;font-size:11.2px;color:#d0d0d0;font-weight:bold;letter-spacing:-0.2px">SEQ</div>
<svg class="a" style="left:516px;top:593px" width="10" height="9" viewBox="0 0 10 9"><path d="M0 1.2h10M0 4.5h10M0 7.8h10" stroke="#b0b0b0" stroke-width="1.7"/></svg>
<div class="a t" style="left:477px;top:619.2px;font-size:16.8px;color:#4e8fe0;font-weight:bold">00:00:21:00</div>
<svg class="a" style="left:480px;top:640px" width="17" height="17" viewBox="0 0 17 17"><path d="M8.5 1v15M1.5 4.5l14 8M1.5 12.5l14-8" stroke="#5a95e0" stroke-width="1.8"/><circle cx="8.5" cy="8.5" r="2.5" fill="#232323" stroke="#5a95e0" stroke-width="1.3"/></svg>
<svg class="a" style="left:516px;top:641px" width="16" height="15" viewBox="0 0 16 15"><path d="M3 14V8a5 5 0 0 1 10 0v6" fill="none" stroke="#4a86d6" stroke-width="3.2"/></svg>
<svg class="a" style="left:551px;top:640px" width="18" height="17" viewBox="0 0 18 17"><rect x="1" y="1" width="4" height="6" fill="#4d8fe6"/><rect x="1" y="9" width="4" height="6" fill="#4d8fe6"/><path d="M7 1h10L12 7l5 9-5-4-5 4z" fill="#4d8fe6"/></svg>
<svg class="a" style="left:590px;top:641px" width="12" height="14" viewBox="0 0 12 14"><path d="M1 1h10v8l-5 4-5-4z" fill="#c4c4c4"/></svg>
<svg class="a" style="left:622px;top:640px" width="18" height="18" viewBox="0 0 18 18"><path d="M5.5 5.5L15.3 15.3" stroke="#c4c4c4" stroke-width="3.4" stroke-linecap="round"/><circle cx="5.2" cy="5.2" r="4.6" fill="#c4c4c4"/><path d="M3.2 -0.6L7.2 3.4 3.4 7.2 -0.6 3.2z" fill="#232323"/></svg>
<div class="a" style="left:658px;top:642px;width:17px;height:11.5px;background:#3a3a3a;border-radius:2px"></div>
<div class="a t" style="left:660.5px;top:644px;font-size:8.5px;color:#242424;font-weight:bold">CC</div>
<div class="a t" style="left:707px;top:631.5px;font-size:11.3px;color:#b4b4b4;">:00:00</div>
<div class="a t" style="left:754.5px;top:631.5px;font-size:11.3px;color:#b4b4b4;">00:00:04:23</div>
<div class="a t" style="left:831px;top:631.5px;font-size:11.3px;color:#b4b4b4;">00:00:09:23</div>
<div class="a t" style="left:907.7px;top:631.5px;font-size:11.3px;color:#b4b4b4;">00:00:14:23</div>
<div class="a t" style="left:984px;top:631.5px;font-size:11.3px;color:#b4b4b4;">00:00:19:23</div>
<div class="a t" style="left:1061px;top:631.5px;font-size:11.3px;color:#b4b4b4;">00:00:24:23</div>
<div class="a t" style="left:1137.5px;top:631.5px;font-size:11.3px;color:#b4b4b4;">00:00:29:23</div>
<div class="a t" style="left:1214px;top:631.5px;font-size:11.3px;color:#b4b4b4;">00:00:34:23</div>
<div class="a t" style="left:1290.5px;top:631.5px;font-size:11.3px;color:#b4b4b4;">00:00:39:23</div>
<div class="a t" style="left:1367px;top:631.5px;font-size:11.3px;color:#b4b4b4;">00:00:44:22</div>
<div class="a t" style="left:1444px;top:631.5px;font-size:11.3px;color:#b4b4b4;">00:00:49:22</div>
<div class="a t" style="left:1521px;top:631.5px;font-size:11.3px;color:#b4b4b4;">00:00:5</div>
<div class="a" style="left:707.0px;top:645.0px;width:1.2px;height:11.5px;background:#555;"></div>
<div class="a" style="left:714.7px;top:651.0px;width:1.2px;height:5.5px;background:#555;"></div>
<div class="a" style="left:722.3px;top:651.0px;width:1.2px;height:5.5px;background:#555;"></div>
<div class="a" style="left:730.0px;top:651.0px;width:1.2px;height:5.5px;background:#555;"></div>
<div class="a" style="left:737.6px;top:651.0px;width:1.2px;height:5.5px;background:#555;"></div>
<div class="a" style="left:745.3px;top:651.0px;width:1.2px;height:5.5px;background:#555;"></div>
<div class="a" style="left:753.0px;top:651.0px;width:1.2px;height:5.5px;background:#555;"></div>
<div class="a" style="left:760.6px;top:651.0px;width:1.2px;height:5.5px;background:#555;"></div>
<div class="a" style="left:768.3px;top:651.0px;width:1.2px;height:5.5px;background:#555;"></div>
<div class="a" style="left:775.9px;top:651.0px;width:1.2px;height:5.5px;background:#555;"></div>
<div class="a" style="left:783.6px;top:645.0px;width:1.2px;height:11.5px;background:#555;"></div>
<div class="a" style="left:791.3px;top:651.0px;width:1.2px;height:5.5px;background:#555;"></div>
<div class="a" style="left:798.9px;top:651.0px;width:1.2px;height:5.5px;background:#555;"></div>
<div class="a" style="left:806.6px;top:651.0px;width:1.2px;height:5.5px;background:#555;"></div>
<div class="a" style="left:814.2px;top:651.0px;width:1.2px;height:5.5px;background:#555;"></div>
<div class="a" style="left:821.9px;top:651.0px;width:1.2px;height:5.5px;background:#555;"></div>
<div class="a" style="left:829.6px;top:651.0px;width:1.2px;height:5.5px;background:#555;"></div>
<div class="a" style="left:837.2px;top:651.0px;width:1.2px;height:5.5px;background:#555;"></div>
<div class="a" style="left:844.9px;top:651.0px;width:1.2px;height:5.5px;background:#555;"></div>
<div class="a" style="left:852.5px;top:651.0px;width:1.2px;height:5.5px;background:#555;"></div>
<div class="a" style="left:860.2px;top:645.0px;width:1.2px;height:11.5px;background:#555;"></div>
<div class="a" style="left:867.9px;top:651.0px;width:1.2px;height:5.5px;background:#555;"></div>
<div class="a" style="left:875.5px;top:651.0px;width:1.2px;height:5.5px;background:#555;"></div>
<div class="a" style="left:883.2px;top:651.0px;width:1.2px;height:5.5px;background:#555;"></div>
<div class="a" style="left:890.8px;top:651.0px;width:1.2px;height:5.5px;background:#555;"></div>
<div class="a" style="left:898.5px;top:651.0px;width:1.2px;height:5.5px;background:#555;"></div>
<div class="a" style="left:906.2px;top:651.0px;width:1.2px;height:5.5px;background:#555;"></div>
<div class="a" style="left:913.8px;top:651.0px;width:1.2px;height:5.5px;background:#555;"></div>
<div class="a" style="left:921.5px;top:651.0px;width:1.2px;height:5.5px;background:#555;"></div>
<div class="a" style="left:929.1px;top:651.0px;width:1.2px;height:5.5px;background:#555;"></div>
<div class="a" style="left:936.8px;top:645.0px;width:1.2px;height:11.5px;background:#555;"></div>
<div class="a" style="left:944.5px;top:651.0px;width:1.2px;height:5.5px;background:#555;"></div>
<div class="a" style="left:952.1px;top:651.0px;width:1.2px;height:5.5px;background:#555;"></div>
<div class="a" style="left:959.8px;top:651.0px;width:1.2px;height:5.5px;background:#555;"></div>
<div class="a" style="left:967.4px;top:651.0px;width:1.2px;height:5.5px;background:#555;"></div>
<div class="a" style="left:975.1px;top:651.0px;width:1.2px;height:5.5px;background:#555;"></div>
<div class="a" style="left:982.8px;top:651.0px;width:1.2px;height:5.5px;background:#555;"></div>
<div class="a" style="left:990.4px;top:651.0px;width:1.2px;height:5.5px;background:#555;"></div>
<div class="a" style="left:998.1px;top:651.0px;width:1.2px;height:5.5px;background:#555;"></div>
<div class="a" style="left:1005.7px;top:651.0px;width:1.2px;height:5.5px;background:#555;"></div>
<div class="a" style="left:1013.4px;top:645.0px;width:1.2px;height:11.5px;background:#555;"></div>
<div class="a" style="left:1021.1px;top:651.0px;width:1.2px;height:5.5px;background:#555;"></div>
<div class="a" style="left:1028.7px;top:651.0px;width:1.2px;height:5.5px;background:#555;"></div>
<div class="a" style="left:1036.4px;top:651.0px;width:1.2px;height:5.5px;background:#555;"></div>
<div class="a" style="left:1044.0px;top:651.0px;width:1.2px;height:5.5px;background:#555;"></div>
<div class="a" style="left:1051.7px;top:651.0px;width:1.2px;height:5.5px;background:#555;"></div>
<div class="a" style="left:1059.4px;top:651.0px;width:1.2px;height:5.5px;background:#555;"></div>
<div class="a" style="left:1067.0px;top:651.0px;width:1.2px;height:5.5px;background:#555;"></div>
<div class="a" style="left:1074.7px;top:651.0px;width:1.2px;height:5.5px;background:#555;"></div>
<div class="a" style="left:1082.3px;top:651.0px;width:1.2px;height:5.5px;background:#555;"></div>
<div class="a" style="left:1090.0px;top:645.0px;width:1.2px;height:11.5px;background:#555;"></div>
<div class="a" style="left:1097.7px;top:651.0px;width:1.2px;height:5.5px;background:#555;"></div>
<div class="a" style="left:1105.3px;top:651.0px;width:1.2px;height:5.5px;background:#555;"></div>
<div class="a" style="left:1113.0px;top:651.0px;width:1.2px;height:5.5px;background:#555;"></div>
<div class="a" style="left:1120.6px;top:651.0px;width:1.2px;height:5.5px;background:#555;"></div>
<div class="a" style="left:1128.3px;top:651.0px;width:1.2px;height:5.5px;background:#555;"></div>
<div class="a" style="left:1136.0px;top:651.0px;width:1.2px;height:5.5px;background:#555;"></div>
<div class="a" style="left:1143.6px;top:651.0px;width:1.2px;height:5.5px;background:#555;"></div>
<div class="a" style="left:1151.3px;top:651.0px;width:1.2px;height:5.5px;background:#555;"></div>
<div class="a" style="left:1158.9px;top:651.0px;width:1.2px;height:5.5px;background:#555;"></div>
<div class="a" style="left:1166.6px;top:645.0px;width:1.2px;height:11.5px;background:#555;"></div>
<div class="a" style="left:1174.3px;top:651.0px;width:1.2px;height:5.5px;background:#555;"></div>
<div class="a" style="left:1181.9px;top:651.0px;width:1.2px;height:5.5px;background:#555;"></div>
<div class="a" style="left:1189.6px;top:651.0px;width:1.2px;height:5.5px;background:#555;"></div>
<div class="a" style="left:1197.2px;top:651.0px;width:1.2px;height:5.5px;background:#555;"></div>
<div class="a" style="left:1204.9px;top:651.0px;width:1.2px;height:5.5px;background:#555;"></div>
<div class="a" style="left:1212.6px;top:651.0px;width:1.2px;height:5.5px;background:#555;"></div>
<div class="a" style="left:1220.2px;top:651.0px;width:1.2px;height:5.5px;background:#555;"></div>
<div class="a" style="left:1227.9px;top:651.0px;width:1.2px;height:5.5px;background:#555;"></div>
<div class="a" style="left:1235.5px;top:651.0px;width:1.2px;height:5.5px;background:#555;"></div>
<div class="a" style="left:1243.2px;top:645.0px;width:1.2px;height:11.5px;background:#555;"></div>
<div class="a" style="left:1250.9px;top:651.0px;width:1.2px;height:5.5px;background:#555;"></div>
<div class="a" style="left:1258.5px;top:651.0px;width:1.2px;height:5.5px;background:#555;"></div>
<div class="a" style="left:1266.2px;top:651.0px;width:1.2px;height:5.5px;background:#555;"></div>
<div class="a" style="left:1273.8px;top:651.0px;width:1.2px;height:5.5px;background:#555;"></div>
<div class="a" style="left:1281.5px;top:651.0px;width:1.2px;height:5.5px;background:#555;"></div>
<div class="a" style="left:1289.2px;top:651.0px;width:1.2px;height:5.5px;background:#555;"></div>
<div class="a" style="left:1296.8px;top:651.0px;width:1.2px;height:5.5px;background:#555;"></div>
<div class="a" style="left:1304.5px;top:651.0px;width:1.2px;height:5.5px;background:#555;"></div>
<div class="a" style="left:1312.1px;top:651.0px;width:1.2px;height:5.5px;background:#555;"></div>
<div class="a" style="left:1319.8px;top:645.0px;width:1.2px;height:11.5px;background:#555;"></div>
<div class="a" style="left:1327.5px;top:651.0px;width:1.2px;height:5.5px;background:#555;"></div>
<div class="a" style="left:1335.1px;top:651.0px;width:1.2px;height:5.5px;background:#555;"></div>
<div class="a" style="left:1342.8px;top:651.0px;width:1.2px;height:5.5px;background:#555;"></div>
<div class="a" style="left:1350.4px;top:651.0px;width:1.2px;height:5.5px;background:#555;"></div>
<div class="a" style="left:1358.1px;top:651.0px;width:1.2px;height:5.5px;background:#555;"></div>
<div class="a" style="left:1365.8px;top:651.0px;width:1.2px;height:5.5px;background:#555;"></div>
<div class="a" style="left:1373.4px;top:651.0px;width:1.2px;height:5.5px;background:#555;"></div>
<div class="a" style="left:1381.1px;top:651.0px;width:1.2px;height:5.5px;background:#555;"></div>
<div class="a" style="left:1388.7px;top:651.0px;width:1.2px;height:5.5px;background:#555;"></div>
<div class="a" style="left:1396.4px;top:645.0px;width:1.2px;height:11.5px;background:#555;"></div>
<div class="a" style="left:1404.1px;top:651.0px;width:1.2px;height:5.5px;background:#555;"></div>
<div class="a" style="left:1411.7px;top:651.0px;width:1.2px;height:5.5px;background:#555;"></div>
<div class="a" style="left:1419.4px;top:651.0px;width:1.2px;height:5.5px;background:#555;"></div>
<div class="a" style="left:1427.0px;top:651.0px;width:1.2px;height:5.5px;background:#555;"></div>
<div class="a" style="left:1434.7px;top:651.0px;width:1.2px;height:5.5px;background:#555;"></div>
<div class="a" style="left:1442.4px;top:651.0px;width:1.2px;height:5.5px;background:#555;"></div>
<div class="a" style="left:1450.0px;top:651.0px;width:1.2px;height:5.5px;background:#555;"></div>
<div class="a" style="left:1457.7px;top:651.0px;width:1.2px;height:5.5px;background:#555;"></div>
<div class="a" style="left:1465.3px;top:651.0px;width:1.2px;height:5.5px;background:#555;"></div>
<div class="a" style="left:1473.0px;top:645.0px;width:1.2px;height:11.5px;background:#555;"></div>
<div class="a" style="left:1480.7px;top:651.0px;width:1.2px;height:5.5px;background:#555;"></div>
<div class="a" style="left:1488.3px;top:651.0px;width:1.2px;height:5.5px;background:#555;"></div>
<div class="a" style="left:1496.0px;top:651.0px;width:1.2px;height:5.5px;background:#555;"></div>
<div class="a" style="left:1503.6px;top:651.0px;width:1.2px;height:5.5px;background:#555;"></div>
<div class="a" style="left:1511.3px;top:651.0px;width:1.2px;height:5.5px;background:#555;"></div>
<div class="a" style="left:1519.0px;top:651.0px;width:1.2px;height:5.5px;background:#555;"></div>
<div class="a" style="left:1526.6px;top:651.0px;width:1.2px;height:5.5px;background:#555;"></div>
<div class="a" style="left:1534.3px;top:651.0px;width:1.2px;height:5.5px;background:#555;"></div>
<div class="a" style="left:1541.9px;top:651.0px;width:1.2px;height:5.5px;background:#555;"></div>
<div class="a" style="left:1549.6px;top:645.0px;width:1.2px;height:11.5px;background:#555;"></div>
<div class="a" style="left:1557.3px;top:651.0px;width:1.2px;height:5.5px;background:#555;"></div>
<div class="a" style="left:706px;top:656px;width:302px;height:3px;background:#e5d94a;"></div>
<div class="a" style="left:1386.5px;top:656px;width:77px;height:3px;background:#e5d94a;"></div>
<div class="a" style="left:458px;top:662px;width:1101px;height:1px;background:#2c2c2c;"></div>
<div class="a" style="left:706px;top:663px;width:853px;height:238px;background:#202020;"></div>
<div class="a" style="left:458px;top:720px;width:1101px;height:1px;background:#2c2c2c;"></div>
<div class="a" style="left:458px;top:777px;width:1112px;height:5px;background:#2e2e2e;"></div>
<div class="a" style="left:458px;top:850px;width:1101px;height:1px;background:#2c2c2c;"></div>
<div class="a" style="left:705px;top:663px;width:1px;height:238px;background:#2a2a2a;"></div>
<div class="a" style="left:526.5px;top:721px;width:34px;height:56px;background:#24578a;"></div>
<div class="a" style="left:472px;top:782px;width:34px;height:67px;background:#24578a;"></div>
<div class="a" style="left:526.5px;top:782px;width:34px;height:68px;background:#24578a;"></div>
<div class="a" style="left:526.5px;top:851px;width:34px;height:50px;background:#24578a;"></div>
<div class="a t" style="left:535px;top:687px;font-size:10.6px;color:#a0a0a0;">V2</div>
<div class="a t" style="left:535px;top:744px;font-size:10.6px;color:#a8c4e4;">V1</div>
<div class="a t" style="left:482px;top:811px;font-size:10.6px;color:#a8c4e4;">A1</div>
<div class="a t" style="left:535px;top:811px;font-size:10.6px;color:#a8c4e4;">A1</div>
<div class="a t" style="left:535px;top:879px;font-size:10.6px;color:#a8c4e4;">A2</div>
<div class="a t" style="left:562px;top:695.5px;font-size:12px;color:#b4b4b4;letter-spacing:-0.35px">B-Roll</div>
<div class="a t" style="left:562px;top:753.8px;font-size:12px;color:#b4b4b4;letter-spacing:-0.35px">Text Overlay</div>
<div class="a t" style="left:562px;top:815.5px;font-size:12px;color:#b4b4b4;letter-spacing:-0.35px">VO Recording</div>
<div class="a t" style="left:562px;top:883.5px;font-size:12px;color:#b4b4b4;letter-spacing:-0.35px">Music</div>
<svg class="a" style="left:509.5px;top:683px" width="12" height="14" viewBox="0 0 12 14"><path d="M3.2 6.5V4.2a2.8 2.8 0 0 1 5.6 0" fill="none" stroke="#c0c0c0" stroke-width="2"/><rect x="1.5" y="6" width="9" height="7.5" rx="1" fill="#c0c0c0"/><rect x="5.2" y="8.3" width="1.6" height="3" fill="#232323"/></svg>
<svg class="a" style="left:509.5px;top:741px" width="12" height="14" viewBox="0 0 12 14"><path d="M3.2 6.5V4.2a2.8 2.8 0 0 1 5.6 0" fill="none" stroke="#c0c0c0" stroke-width="2"/><rect x="1.5" y="6" width="9" height="7.5" rx="1" fill="#c0c0c0"/><rect x="5.2" y="8.3" width="1.6" height="3" fill="#232323"/></svg>
<svg class="a" style="left:509.5px;top:808.5px" width="12" height="14" viewBox="0 0 12 14"><path d="M3.2 6.5V4.2a2.8 2.8 0 0 1 5.6 0" fill="none" stroke="#c0c0c0" stroke-width="2"/><rect x="1.5" y="6" width="9" height="7.5" rx="1" fill="#c0c0c0"/><rect x="5.2" y="8.3" width="1.6" height="3" fill="#232323"/></svg>
<svg class="a" style="left:509.5px;top:876px" width="12" height="14" viewBox="0 0 12 14"><path d="M3.2 6.5V4.2a2.8 2.8 0 0 1 5.6 0" fill="none" stroke="#c0c0c0" stroke-width="2"/><rect x="1.5" y="6" width="9" height="7.5" rx="1" fill="#c0c0c0"/><rect x="5.2" y="8.3" width="1.6" height="3" fill="#232323"/></svg>
<svg class="a" style="left:566px;top:669px" width="16" height="12" viewBox="0 0 16 12"><rect x="0.5" y="1" width="11" height="10" rx="1.5" fill="#b8b8b8"/><rect x="2" y="2.8" width="6" height="2.4" fill="#6a6a6a"/><rect x="2" y="6.8" width="6" height="2.4" fill="#6a6a6a"/><path d="M11 4l4.5-2v8L11 8z" fill="#b8b8b8"/><circle cx="12.5" cy="6" r="1.2" fill="#333"/></svg>
<svg class="a" style="left:594px;top:671px" width="16" height="10" viewBox="0 0 16 10"><path d="M1 5c2-3 4.5-4 7-4s5 1 7 4c-2 3-4.5 4-7 4S3 8 1 5z" fill="#c8c8c8"/><circle cx="8" cy="5" r="2.6" fill="#232323"/><circle cx="8" cy="5" r="1.2" fill="#c8c8c8"/></svg>
<svg class="a" style="left:566px;top:727px" width="16" height="12" viewBox="0 0 16 12"><rect x="0.5" y="1" width="11" height="10" rx="1.5" fill="#b8b8b8"/><rect x="2" y="2.8" width="6" height="2.4" fill="#6a6a6a"/><rect x="2" y="6.8" width="6" height="2.4" fill="#6a6a6a"/><path d="M11 4l4.5-2v8L11 8z" fill="#b8b8b8"/><circle cx="12.5" cy="6" r="1.2" fill="#333"/></svg>
<svg class="a" style="left:594px;top:728px" width="16" height="10" viewBox="0 0 16 10"><path d="M1 5c2-3 4.5-4 7-4s5 1 7 4c-2 3-4.5 4-7 4S3 8 1 5z" fill="#c8c8c8"/><circle cx="8" cy="5" r="2.6" fill="#232323"/><circle cx="8" cy="5" r="1.2" fill="#c8c8c8"/></svg>
<svg class="a" style="left:566px;top:789px" width="16" height="12" viewBox="0 0 16 12"><rect x="0.5" y="1" width="11" height="10" rx="1.5" fill="#b8b8b8"/><rect x="2" y="2.8" width="6" height="2.4" fill="#6a6a6a"/><rect x="2" y="6.8" width="6" height="2.4" fill="#6a6a6a"/><path d="M11 4l4.5-2v8L11 8z" fill="#b8b8b8"/><circle cx="12.5" cy="6" r="1.2" fill="#333"/></svg>
<svg class="a" style="left:566px;top:857px" width="16" height="12" viewBox="0 0 16 12"><rect x="0.5" y="1" width="11" height="10" rx="1.5" fill="#b8b8b8"/><rect x="2" y="2.8" width="6" height="2.4" fill="#6a6a6a"/><rect x="2" y="6.8" width="6" height="2.4" fill="#6a6a6a"/><path d="M11 4l4.5-2v8L11 8z" fill="#b8b8b8"/><circle cx="12.5" cy="6" r="1.2" fill="#333"/></svg>
<div class="a t" style="left:596.5px;top:790px;font-size:11px;color:#b8b8b8;font-weight:bold">M</div>
<div class="a t" style="left:626.5px;top:790px;font-size:11px;color:#b8b8b8;font-weight:bold">S</div>
<div class="a t" style="left:596.5px;top:858px;font-size:11px;color:#b8b8b8;font-weight:bold">M</div>
<div class="a t" style="left:626.5px;top:858px;font-size:11px;color:#b8b8b8;font-weight:bold">S</div>
<svg class="a" style="left:653px;top:787px" width="12" height="16" viewBox="0 0 12 16"><rect x="3" y="0.5" width="6" height="10" rx="3" fill="#c0c0c0"/><path d="M1.5 7c0 3 2 4.5 4.5 4.5S10.5 10 10.5 7M6 11.5V14M3 15h6" fill="none" stroke="#c0c0c0" stroke-width="1.4"/></svg>
<svg class="a" style="left:653px;top:855px" width="12" height="16" viewBox="0 0 12 16"><rect x="3" y="0.5" width="6" height="10" rx="3" fill="#c0c0c0"/><path d="M1.5 7c0 3 2 4.5 4.5 4.5S10.5 10 10.5 7M6 11.5V14M3 15h6" fill="none" stroke="#c0c0c0" stroke-width="1.4"/></svg>
<div class="a" style="left:707px;top:720px;width:74px;height:57px;background:#000;overflow:hidden;border-left:1px solid #3a3a3a"><div class="a" style="left:0;top:0;width:74px;height:17.5px;background:#d98fe1"></div><div class="a" style="left:10px;top:4px;width:12px;height:11px;background:#b49be6"></div><div class="a t" style="left:12px;top:5.5px;font-size:8.5px;font-style:italic;color:#6a4fc0;-webkit-text-stroke:0;text-shadow:none">fx</div><div class="a t" style="left:29px;top:5px;font-size:9.5px;color:#5a3d6c;-webkit-text-stroke:0;text-shadow:none">Haiti has</div><div class="a t" style="right:4px;top:27.5px;width:66px;font-size:3.2px;line-height:3.2px;white-space:normal;text-align:right;color:#f0f0f0;font-weight:bold;-webkit-text-stroke:0;text-shadow:none">Haiti has a population of 11 million people and 59% of the population live poverty</div></div>
<div class="a" style="left:782px;top:720px;width:75px;height:57px;background:#000;overflow:hidden;border-left:1px solid #3a3a3a"><div class="a" style="left:0;top:0;width:75px;height:17.5px;background:#d98fe1"></div><div class="a" style="left:10px;top:4px;width:12px;height:11px;background:#b49be6"></div><div class="a t" style="left:12px;top:5.5px;font-size:8.5px;font-style:italic;color:#6a4fc0;-webkit-text-stroke:0;text-shadow:none">fx</div><div class="a t" style="left:29px;top:5px;font-size:9.5px;color:#5a3d6c;-webkit-text-stroke:0;text-shadow:none">Sadly, 2 o</div><div class="a t" style="right:4px;top:27.5px;width:67px;font-size:3.2px;line-height:3.2px;white-space:normal;text-align:right;color:#f0f0f0;font-weight:bold;-webkit-text-stroke:0;text-shadow:none">Sadly, 2 out of 3 children do not receive an education</div></div>
<div class="a" style="left:858px;top:720px;width:74px;height:57px;background:#000;overflow:hidden;border-left:1px solid #3a3a3a"><div class="a" style="left:0;top:0;width:74px;height:17.5px;background:#d98fe1"></div><div class="a" style="left:10px;top:4px;width:12px;height:11px;background:#b49be6"></div><div class="a t" style="left:12px;top:5.5px;font-size:8.5px;font-style:italic;color:#6a4fc0;-webkit-text-stroke:0;text-shadow:none">fx</div><div class="a t" style="left:29px;top:5px;font-size:9.5px;color:#5a3d6c;-webkit-text-stroke:0;text-shadow:none">1 in 5 chil</div><div class="a t" style="right:4px;top:27.5px;width:66px;font-size:3.2px;line-height:3.2px;white-space:normal;text-align:right;color:#f0f0f0;font-weight:bold;-webkit-text-stroke:0;text-shadow:none">1 in 5 children do not have enough food to eat</div></div>
<div class="a" style="left:933px;top:720px;width:74px;height:57px;background:#000;overflow:hidden;border-left:1px solid #3a3a3a"><div class="a" style="left:0;top:0;width:74px;height:17.5px;background:#d98fe1"></div><div class="a" style="left:10px;top:4px;width:12px;height:11px;background:#b49be6"></div><div class="a t" style="left:12px;top:5.5px;font-size:8.5px;font-style:italic;color:#6a4fc0;-webkit-text-stroke:0;text-shadow:none">fx</div><div class="a t" style="left:29px;top:5px;font-size:9.5px;color:#5a3d6c;-webkit-text-stroke:0;text-shadow:none">As a resul</div><div class="a t" style="right:4px;top:27.5px;width:66px;font-size:3.2px;line-height:3.2px;white-space:normal;text-align:right;color:#f0f0f0;font-weight:bold;-webkit-text-stroke:0;text-shadow:none">As a result, many of them do not attend school</div></div>
<div class="a" style="left:1387.5px;top:720px;width:75.5px;height:57px;background:#000;overflow:hidden;border-left:1px solid #3a3a3a"><div class="a" style="left:0;top:0;width:75.5px;height:17.5px;background:#d98fe1"></div><div class="a" style="left:10px;top:4px;width:12px;height:11px;background:#b49be6"></div><div class="a t" style="left:12px;top:5.5px;font-size:8.5px;font-style:italic;color:#6a4fc0;-webkit-text-stroke:0;text-shadow:none">fx</div><div class="a t" style="left:29px;top:5px;font-size:9.5px;color:#5a3d6c;-webkit-text-stroke:0;text-shadow:none">Visit https</div><div class="a t" style="right:4px;top:27.5px;width:67.5px;font-size:3.2px;line-height:3.2px;white-space:normal;text-align:right;color:#f0f0f0;font-weight:bold;-webkit-text-stroke:0;text-shadow:none">Visit https bethemediator.org</div></div>
<svg class="a" style="left:1007px;top:782px" width="380" height="69" viewBox="0 0 380 69"><rect x="0" y="0" width="379" height="68" fill="#397c59"/><path d="M2.5,31L2.5,31.0L3.5,31.0L3.5,31.0L4.5,31.0L4.5,31.0L5.5,31.0L5.5,28.2L6.5,28.2L6.5,24.3L7.5,24.3L7.5,9.4L8.5,9.4L8.5,18.7L9.5,18.7L9.5,16.8L10.5,16.8L10.5,15.5L11.5,15.5L11.5,18.6L12.5,18.6L12.5,18.6L13.5,18.6L13.5,22.5L14.5,22.5L14.5,24.7L15.5,24.7L15.5,29.1L16.5,29.1L16.5,31.0L17.5,31.0L17.5,26.8L18.5,26.8L18.5,14.9L19.5,14.9L19.5,19.0L20.5,19.0L20.5,15.8L21.5,15.8L21.5,16.4L22.5,16.4L22.5,13.7L23.5,13.7L23.5,15.0L24.5,15.0L24.5,10.4L25.5,10.4L25.5,4.0L26.5,4.0L26.5,12.7L27.5,12.7L27.5,9.9L28.5,9.9L28.5,18.3L29.5,18.3L29.5,8.2L30.5,8.2L30.5,20.8L31.5,20.8L31.5,13.3L32.5,13.3L32.5,23.5L33.5,23.5L33.5,25.9L34.5,25.9L34.5,20.1L35.5,20.1L35.5,19.3L36.5,19.3L36.5,12.7L37.5,12.7L37.5,12.8L38.5,12.8L38.5,16.7L39.5,16.7L39.5,12.6L40.5,12.6L40.5,19.0L41.5,19.0L41.5,18.3L42.5,18.3L42.5,16.1L43.5,16.1L43.5,4.9L44.5,4.9L44.5,17.8L45.5,17.8L45.5,18.4L46.5,18.4L46.5,19.3L47.5,19.3L47.5,21.5L48.5,21.5L48.5,25.7L49.5,25.7L49.5,24.5L50.5,24.5L50.5,26.4L51.5,26.4L51.5,28.9L52.5,28.9L52.5,24.2L53.5,24.2L53.5,31.0L54.5,31.0L54.5,31.0L55.5,31.0L55.5,12.4L56.5,12.4L56.5,16.3L57.5,16.3L57.5,4.0L58.5,4.0L58.5,8.6L59.5,8.6L59.5,16.7L60.5,16.7L60.5,19.2L61.5,19.2L61.5,24.9L62.5,24.9L62.5,27.4L63.5,27.4L63.5,31.0L64.5,31.0L64.5,29.1L65.5,29.1L65.5,26.7L66.5,26.7L66.5,14.6L67.5,14.6L67.5,18.5L68.5,18.5L68.5,21.1L69.5,21.1L69.5,20.2L70.5,20.2L70.5,9.6L71.5,9.6L71.5,12.3L72.5,12.3L72.5,15.5L73.5,15.5L73.5,11.6L74.5,11.6L74.5,11.5L75.5,11.5L75.5,16.9L76.5,16.9L76.5,9.5L77.5,9.5L77.5,11.3L78.5,11.3L78.5,11.9L79.5,11.9L79.5,14.1L80.5,14.1L80.5,4.0L81.5,4.0L81.5,18.1L82.5,18.1L82.5,16.1L83.5,16.1L83.5,19.3L84.5,19.3L84.5,17.3L85.5,17.3L85.5,22.4L86.5,22.4L86.5,24.3L87.5,24.3L87.5,26.4L88.5,26.4L88.5,26.7L89.5,26.7L89.5,29.1L90.5,29.1L90.5,30.0L91.5,30.0L91.5,31.0L92.5,31.0L92.5,31.0L93.5,31.0L94,31Z" fill="#62d39b"/><path d="M2.5,65L2.5,65.0L3.5,65.0L3.5,65.0L4.5,65.0L4.5,65.0L5.5,65.0L5.5,61.7L6.5,61.7L6.5,57.1L7.5,57.1L7.5,39.5L8.5,39.5L8.5,50.4L9.5,50.4L9.5,48.2L10.5,48.2L10.5,46.6L11.5,46.6L11.5,50.3L12.5,50.3L12.5,50.3L13.5,50.3L13.5,54.9L14.5,54.9L14.5,57.5L15.5,57.5L15.5,62.7L16.5,62.7L16.5,65.0L17.5,65.0L17.5,60.0L18.5,60.0L18.5,45.9L19.5,45.9L19.5,50.8L20.5,50.8L20.5,47.0L21.5,47.0L21.5,47.7L22.5,47.7L22.5,44.5L23.5,44.5L23.5,46.1L24.5,46.1L24.5,40.6L25.5,40.6L25.5,33.0L26.5,33.0L26.5,43.3L27.5,43.3L27.5,40.0L28.5,40.0L28.5,50.0L29.5,50.0L29.5,37.9L30.5,37.9L30.5,52.9L31.5,52.9L31.5,44.1L32.5,44.1L32.5,56.1L33.5,56.1L33.5,58.9L34.5,58.9L34.5,52.0L35.5,52.0L35.5,51.2L36.5,51.2L36.5,43.3L37.5,43.3L37.5,43.5L38.5,43.5L38.5,48.1L39.5,48.1L39.5,43.2L40.5,43.2L40.5,50.8L41.5,50.8L41.5,50.0L42.5,50.0L42.5,47.4L43.5,47.4L43.5,34.0L44.5,34.0L44.5,49.4L45.5,49.4L45.5,50.0L46.5,50.0L46.5,51.2L47.5,51.2L47.5,53.8L48.5,53.8L48.5,58.7L49.5,58.7L49.5,57.3L50.5,57.3L50.5,59.6L51.5,59.6L51.5,62.5L52.5,62.5L52.5,57.0L53.5,57.0L53.5,65.0L54.5,65.0L54.5,65.0L55.5,65.0L55.5,42.9L56.5,42.9L56.5,47.6L57.5,47.6L57.5,33.0L58.5,33.0L58.5,38.4L59.5,38.4L59.5,48.0L60.5,48.0L60.5,51.1L61.5,51.1L61.5,57.7L62.5,57.7L62.5,60.8L63.5,60.8L63.5,65.0L64.5,65.0L64.5,62.7L65.5,62.7L65.5,59.9L66.5,59.9L66.5,45.6L67.5,45.6L67.5,50.1L68.5,50.1L68.5,53.3L69.5,53.3L69.5,52.2L70.5,52.2L70.5,39.6L71.5,39.6L71.5,42.9L72.5,42.9L72.5,46.7L73.5,46.7L73.5,42.0L74.5,42.0L74.5,41.9L75.5,41.9L75.5,48.3L76.5,48.3L76.5,39.5L77.5,39.5L77.5,41.6L78.5,41.6L78.5,42.4L79.5,42.4L79.5,44.9L80.5,44.9L80.5,33.0L81.5,33.0L81.5,49.7L82.5,49.7L82.5,47.3L83.5,47.3L83.5,51.1L84.5,51.1L84.5,48.7L85.5,48.7L85.5,54.8L86.5,54.8L86.5,57.0L87.5,57.0L87.5,59.6L88.5,59.6L88.5,59.9L89.5,59.9L89.5,62.7L90.5,62.7L90.5,63.8L91.5,63.8L91.5,65.0L92.5,65.0L92.5,65.0L93.5,65.0L94,65Z" fill="#62d39b"/><rect x="0.5" y="30" width="95.5" height="4.5" fill="#6ad6a2"/><rect x="0.5" y="64" width="95.5" height="4" fill="#6ad6a2"/><rect x="1.5" y="27" width="93.5" height="1.6" fill="#e6f4ec"/><rect x="0.5" y="0" width="1" height="68" fill="#8ab89c"/><rect x="12.5" y="4" width="11" height="10" fill="#5e5e5e" stroke="#9a9a9a" stroke-width="1"/><text x="14.0" y="12.5" font-family="Liberation Sans" font-size="8" font-style="italic" fill="#333">fx</text><path d="M98,31L98.0,31.0L99.0,31.0L99.0,31.0L100.0,31.0L100.0,31.0L101.0,31.0L101.0,31.0L102.0,31.0L102.0,28.4L103.0,28.4L103.0,23.3L104.0,23.3L104.0,15.1L105.0,15.1L105.0,16.6L106.0,16.6L106.0,15.8L107.0,15.8L107.0,4.7L108.0,4.7L108.0,16.4L109.0,16.4L109.0,21.5L110.0,21.5L110.0,22.4L111.0,22.4L111.0,22.2L112.0,22.2L112.0,26.5L113.0,26.5L113.0,28.1L114.0,28.1L114.0,26.6L115.0,26.6L115.0,23.7L116.0,23.7L116.0,17.9L117.0,17.9L117.0,16.3L118.0,16.3L118.0,12.6L119.0,12.6L119.0,15.2L120.0,15.2L120.0,16.0L121.0,16.0L121.0,16.5L122.0,16.5L122.0,16.3L123.0,16.3L123.0,14.4L124.0,14.4L124.0,12.3L125.0,12.3L125.0,15.8L126.0,15.8L126.0,15.3L127.0,15.3L127.0,22.0L128.0,22.0L128.0,23.5L129.0,23.5L129.0,24.6L130.0,24.6L130.0,23.0L131.0,23.0L131.0,26.7L132.0,26.7L132.0,26.9L133.0,26.9L133.0,28.3L134.0,28.3L134.0,31.0L135.0,31.0L135.0,24.8L136.0,24.8L136.0,14.0L137.0,14.0L137.0,15.1L138.0,15.1L138.0,11.0L139.0,11.0L139.0,14.7L140.0,14.7L140.0,4.0L141.0,4.0L141.0,10.6L142.0,10.6L142.0,18.4L143.0,18.4L143.0,16.1L144.0,16.1L144.0,23.3L145.0,23.3L145.0,23.3L146.0,23.3L146.0,28.7L147.0,28.7L147.0,31.0L148.0,31.0L148.0,31.0L149.0,31.0L149.0,31.0L150.0,31.0L150.0,31.0L151.0,31.0L151.0,29.5L152.0,29.5L152.0,27.1L153.0,27.1L153.0,16.9L154.0,16.9L154.0,22.6L155.0,22.6L155.0,23.9L156.0,23.9L156.0,18.8L157.0,18.8L157.0,21.3L158.0,21.3L158.0,21.5L159.0,21.5L159.0,18.6L160.0,18.6L160.0,17.9L161.0,17.9L161.0,20.0L162.0,20.0L162.0,18.1L163.0,18.1L163.0,21.2L164.0,21.2L164.0,21.6L165.0,21.6L165.0,19.7L166.0,19.7L166.0,16.3L167.0,16.3L167.0,18.7L168.0,18.7L168.0,9.7L169.0,9.7L169.0,11.1L170.0,11.1L170.0,20.6L171.0,20.6L171.0,24.3L172.0,24.3L172.0,22.1L173.0,22.1L173.0,23.8L174.0,23.8L174.0,24.8L175.0,24.8L175.0,22.3L176.0,22.3L176.0,17.3L177.0,17.3L177.0,16.9L178.0,16.9L178.0,11.9L179.0,11.9L179.0,14.9L180.0,14.9L180.0,18.4L181.0,18.4L181.0,18.2L182.0,18.2L182.0,16.4L183.0,16.4L183.0,18.1L184.0,18.1L184.0,10.3L185.0,10.3L185.0,16.1L186.0,16.1L186.0,16.8L187.0,16.8L187.0,19.4L188.0,19.4L188.0,20.0L189.0,20.0L189.0,16.9L190.0,16.9L190.0,23.0L191.0,23.0L191.0,24.2L192.0,24.2L192.0,26.8L193.0,26.8L193.0,26.8L194.0,26.8L194.0,28.9L195.0,28.9L195.0,27.1L196.0,27.1L196.0,25.1L197.0,25.1L197.0,20.1L198.0,20.1L198.0,27.6L199.0,27.6L199.0,29.4L200.0,29.4L200.0,31.0L201.0,31.0L201,31Z" fill="#62d39b"/><path d="M98,65L98.0,65.0L99.0,65.0L99.0,65.0L100.0,65.0L100.0,65.0L101.0,65.0L101.0,65.0L102.0,65.0L102.0,61.9L103.0,61.9L103.0,55.9L104.0,55.9L104.0,46.2L105.0,46.2L105.0,47.9L106.0,47.9L106.0,47.0L107.0,47.0L107.0,33.8L108.0,33.8L108.0,47.7L109.0,47.7L109.0,53.7L110.0,53.7L110.0,54.8L111.0,54.8L111.0,54.5L112.0,54.5L112.0,59.6L113.0,59.6L113.0,61.5L114.0,61.5L114.0,59.8L115.0,59.8L115.0,56.4L116.0,56.4L116.0,49.5L117.0,49.5L117.0,47.6L118.0,47.6L118.0,43.2L119.0,43.2L119.0,46.2L120.0,46.2L120.0,47.3L121.0,47.3L121.0,47.9L122.0,47.9L122.0,47.6L123.0,47.6L123.0,45.3L124.0,45.3L124.0,42.9L125.0,42.9L125.0,47.0L126.0,47.0L126.0,46.4L127.0,46.4L127.0,54.3L128.0,54.3L128.0,56.1L129.0,56.1L129.0,57.5L130.0,57.5L130.0,55.5L131.0,55.5L131.0,59.9L132.0,59.9L132.0,60.1L133.0,60.1L133.0,61.8L134.0,61.8L134.0,65.0L135.0,65.0L135.0,57.6L136.0,57.6L136.0,44.9L137.0,44.9L137.0,46.1L138.0,46.1L138.0,41.3L139.0,41.3L139.0,45.7L140.0,45.7L140.0,33.0L141.0,33.0L141.0,40.8L142.0,40.8L142.0,50.1L143.0,50.1L143.0,47.4L144.0,47.4L144.0,55.9L145.0,55.9L145.0,55.9L146.0,55.9L146.0,62.3L147.0,62.3L147.0,65.0L148.0,65.0L148.0,65.0L149.0,65.0L149.0,65.0L150.0,65.0L150.0,65.0L151.0,65.0L151.0,63.2L152.0,63.2L152.0,60.3L153.0,60.3L153.0,48.3L154.0,48.3L154.0,55.1L155.0,55.1L155.0,56.6L156.0,56.6L156.0,50.5L157.0,50.5L157.0,53.6L158.0,53.6L158.0,53.7L159.0,53.7L159.0,50.3L160.0,50.3L160.0,49.4L161.0,49.4L161.0,51.9L162.0,51.9L162.0,49.7L163.0,49.7L163.0,53.3L164.0,53.3L164.0,53.8L165.0,53.8L165.0,51.6L166.0,51.6L166.0,47.6L167.0,47.6L167.0,50.4L168.0,50.4L168.0,39.8L169.0,39.8L169.0,41.4L170.0,41.4L170.0,52.7L171.0,52.7L171.0,57.1L172.0,57.1L172.0,54.5L173.0,54.5L173.0,56.5L174.0,56.5L174.0,57.7L175.0,57.7L175.0,54.7L176.0,54.7L176.0,48.7L177.0,48.7L177.0,48.3L178.0,48.3L178.0,42.4L179.0,42.4L179.0,46.0L180.0,46.0L180.0,50.1L181.0,50.1L181.0,49.9L182.0,49.9L182.0,47.7L183.0,47.7L183.0,49.7L184.0,49.7L184.0,40.5L185.0,40.5L185.0,47.4L186.0,47.4L186.0,48.1L187.0,48.1L187.0,51.3L188.0,51.3L188.0,52.0L189.0,52.0L189.0,48.3L190.0,48.3L190.0,55.6L191.0,55.6L191.0,56.9L192.0,56.9L192.0,60.0L193.0,60.0L193.0,60.0L194.0,60.0L194.0,62.5L195.0,62.5L195.0,60.3L196.0,60.3L196.0,58.0L197.0,58.0L197.0,52.1L198.0,52.1L198.0,60.9L199.0,60.9L199.0,63.1L200.0,63.1L200.0,65.0L201.0,65.0L201,65Z" fill="#62d39b"/><rect x="96" y="30" width="107" height="4.5" fill="#6ad6a2"/><rect x="96" y="64" width="107" height="4" fill="#6ad6a2"/><rect x="97" y="27" width="105" height="1.6" fill="#e6f4ec"/><rect x="96" y="0" width="1" height="68" fill="#8ab89c"/><rect x="108" y="4" width="11" height="10" fill="#5e5e5e" stroke="#9a9a9a" stroke-width="1"/><text x="109.5" y="12.5" font-family="Liberation Sans" font-size="8" font-style="italic" fill="#333">fx</text><path d="M205,31L205.0,31.0L206.0,31.0L206.0,31.0L207.0,31.0L207.0,31.0L208.0,31.0L208.0,31.0L209.0,31.0L209.0,31.0L210.0,31.0L210.0,28.7L211.0,28.7L211.0,14.5L212.0,14.5L212.0,21.2L213.0,21.2L213.0,18.5L214.0,18.5L214.0,8.1L215.0,8.1L215.0,14.3L216.0,14.3L216.0,11.2L217.0,11.2L217.0,11.9L218.0,11.9L218.0,17.5L219.0,17.5L219.0,15.7L220.0,15.7L220.0,15.1L221.0,15.1L221.0,4.0L222.0,4.0L222.0,17.9L223.0,17.9L223.0,16.5L224.0,16.5L224.0,21.4L225.0,21.4L225.0,22.3L226.0,22.3L226.0,23.1L227.0,23.1L227.0,19.5L228.0,19.5L228.0,6.3L229.0,6.3L229.0,17.4L230.0,17.4L230.0,13.3L231.0,13.3L231.0,19.6L232.0,19.6L232.0,17.9L233.0,17.9L233.0,21.4L234.0,21.4L234.0,12.3L235.0,12.3L235.0,16.5L236.0,16.5L236.0,12.5L237.0,12.5L237.0,10.9L238.0,10.9L238.0,15.1L239.0,15.1L239.0,14.2L240.0,14.2L240.0,22.1L241.0,22.1L241.0,21.1L242.0,21.1L242.0,18.8L243.0,18.8L243.0,4.8L244.0,4.8L244.0,13.7L245.0,13.7L245.0,19.2L246.0,19.2L246.0,14.0L247.0,14.0L247.0,17.7L248.0,17.7L248.0,16.8L249.0,16.8L249.0,15.1L250.0,15.1L250.0,16.5L251.0,16.5L251.0,19.9L252.0,19.9L252.0,13.0L253.0,13.0L253.0,12.7L254.0,12.7L254.0,19.5L255.0,19.5L255.0,21.1L256.0,21.1L256.0,17.2L257.0,17.2L257.0,19.6L258.0,19.6L258.0,20.6L259.0,20.6L259.0,23.6L260.0,23.6L260.0,25.9L261.0,25.9L261.0,17.5L262.0,17.5L262.0,10.3L263.0,10.3L263.0,16.9L264.0,16.9L264.0,16.0L265.0,16.0L265.0,13.6L266.0,13.6L266.0,10.3L267.0,10.3L267.0,15.1L268.0,15.1L268.0,14.7L269.0,14.7L269.0,13.7L270.0,13.7L270.0,19.5L271.0,19.5L271.0,20.4L272.0,20.4L272.0,26.0L273.0,26.0L273.0,20.7L274.0,20.7L274.0,23.1L275.0,23.1L275.0,21.9L276.0,21.9L276.0,20.8L277.0,20.8L277.0,19.5L278.0,19.5L278.0,14.5L279.0,14.5L279.0,18.2L280.0,18.2L280.0,17.4L281.0,17.4L281.0,6.9L282.0,6.9L282.0,19.3L283.0,19.3L283.0,20.5L284.0,20.5L284.0,16.6L285.0,16.6L285.0,19.8L286.0,19.8L286.0,19.9L287.0,19.9L287.0,19.5L288.0,19.5L288.0,18.0L289.0,18.0L289.0,11.8L290.0,11.8L290.0,21.4L291.0,21.4L291.0,23.6L292.0,23.6L292.0,26.5L293.0,26.5L293.0,24.4L294.0,24.4L294.0,26.8L295.0,26.8L295.0,29.2L296.0,29.2L296.0,30.2L297.0,30.2L297.0,31.0L298.0,31.0L298.0,31.0L299.0,31.0L299.0,31.0L300.0,31.0L300,31Z" fill="#62d39b"/><path d="M205,65L205.0,65.0L206.0,65.0L206.0,65.0L207.0,65.0L207.0,65.0L208.0,65.0L208.0,65.0L209.0,65.0L209.0,65.0L210.0,65.0L210.0,62.2L211.0,62.2L211.0,45.5L212.0,45.5L212.0,53.4L213.0,53.4L213.0,50.2L214.0,50.2L214.0,37.9L215.0,37.9L215.0,45.2L216.0,45.2L216.0,41.5L217.0,41.5L217.0,42.3L218.0,42.3L218.0,49.0L219.0,49.0L219.0,46.8L220.0,46.8L220.0,46.2L221.0,46.2L221.0,33.0L222.0,33.0L222.0,49.5L223.0,49.5L223.0,47.8L224.0,47.8L224.0,53.6L225.0,53.6L225.0,54.7L226.0,54.7L226.0,55.7L227.0,55.7L227.0,51.4L228.0,51.4L228.0,35.8L229.0,35.8L229.0,48.9L230.0,48.9L230.0,44.1L231.0,44.1L231.0,51.5L232.0,51.5L232.0,49.5L233.0,49.5L233.0,53.6L234.0,53.6L234.0,42.9L235.0,42.9L235.0,47.8L236.0,47.8L236.0,43.1L237.0,43.1L237.0,41.2L238.0,41.2L238.0,46.2L239.0,46.2L239.0,45.0L240.0,45.0L240.0,54.4L241.0,54.4L241.0,53.3L242.0,53.3L242.0,50.5L243.0,50.5L243.0,33.9L244.0,33.9L244.0,44.5L245.0,44.5L245.0,51.1L246.0,51.1L246.0,44.9L247.0,44.9L247.0,49.3L248.0,49.3L248.0,48.2L249.0,48.2L249.0,46.2L250.0,46.2L250.0,47.8L251.0,47.8L251.0,51.8L252.0,51.8L252.0,43.6L253.0,43.6L253.0,43.4L254.0,43.4L254.0,51.3L255.0,51.3L255.0,53.2L256.0,53.2L256.0,48.7L257.0,48.7L257.0,51.5L258.0,51.5L258.0,52.6L259.0,52.6L259.0,56.2L260.0,56.2L260.0,58.9L261.0,58.9L261.0,49.0L262.0,49.0L262.0,40.4L263.0,40.4L263.0,48.3L264.0,48.3L264.0,47.2L265.0,47.2L265.0,44.4L266.0,44.4L266.0,40.5L267.0,40.5L267.0,46.2L268.0,46.2L268.0,45.7L269.0,45.7L269.0,44.5L270.0,44.5L270.0,51.3L271.0,51.3L271.0,52.5L272.0,52.5L272.0,59.1L273.0,59.1L273.0,52.8L274.0,52.8L274.0,55.7L275.0,55.7L275.0,54.2L276.0,54.2L276.0,52.9L277.0,52.9L277.0,51.3L278.0,51.3L278.0,45.5L279.0,45.5L279.0,49.9L280.0,49.9L280.0,48.9L281.0,48.9L281.0,36.5L282.0,36.5L282.0,51.1L283.0,51.1L283.0,52.5L284.0,52.5L284.0,47.9L285.0,47.9L285.0,51.7L286.0,51.7L286.0,51.9L287.0,51.9L287.0,51.4L288.0,51.4L288.0,49.6L289.0,49.6L289.0,42.2L290.0,42.2L290.0,53.6L291.0,53.6L291.0,56.3L292.0,56.3L292.0,59.6L293.0,59.6L293.0,57.2L294.0,57.2L294.0,60.0L295.0,60.0L295.0,62.9L296.0,62.9L296.0,64.0L297.0,64.0L297.0,65.0L298.0,65.0L298.0,65.0L299.0,65.0L299.0,65.0L300.0,65.0L300,65Z" fill="#62d39b"/><rect x="203" y="30" width="99" height="4.5" fill="#6ad6a2"/><rect x="203" y="64" width="99" height="4" fill="#6ad6a2"/><rect x="204" y="27" width="97" height="1.6" fill="#e6f4ec"/><rect x="203" y="0" width="1" height="68" fill="#8ab89c"/><rect x="215" y="4" width="11" height="10" fill="#5e5e5e" stroke="#9a9a9a" stroke-width="1"/><text x="216.5" y="12.5" font-family="Liberation Sans" font-size="8" font-style="italic" fill="#333">fx</text><path d="M304,31L304.0,31.0L305.0,31.0L305.0,31.0L306.0,31.0L306.0,31.0L307.0,31.0L307.0,31.0L308.0,31.0L308.0,26.5L309.0,26.5L309.0,26.4L310.0,26.4L310.0,22.5L311.0,22.5L311.0,16.9L312.0,16.9L312.0,22.3L313.0,22.3L313.0,20.3L314.0,20.3L314.0,23.0L315.0,23.0L315.0,25.5L316.0,25.5L316.0,22.0L317.0,22.0L317.0,28.7L318.0,28.7L318.0,27.1L319.0,27.1L319.0,24.6L320.0,24.6L320.0,22.5L321.0,22.5L321.0,19.8L322.0,19.8L322.0,19.0L323.0,19.0L323.0,12.4L324.0,12.4L324.0,13.7L325.0,13.7L325.0,18.0L326.0,18.0L326.0,4.0L327.0,4.0L327.0,18.3L328.0,18.3L328.0,14.4L329.0,14.4L329.0,16.7L330.0,16.7L330.0,11.4L331.0,11.4L331.0,4.0L332.0,4.0L332.0,16.9L333.0,16.9L333.0,12.6L334.0,12.6L334.0,15.8L335.0,15.8L335.0,15.1L336.0,15.1L336.0,14.8L337.0,14.8L337.0,9.8L338.0,9.8L338.0,23.6L339.0,23.6L339.0,20.8L340.0,20.8L340.0,23.1L341.0,23.1L341.0,24.7L342.0,24.7L342.0,26.2L343.0,26.2L343.0,28.1L344.0,28.1L344.0,28.0L345.0,28.0L345.0,25.7L346.0,25.7L346.0,22.3L347.0,22.3L347.0,21.0L348.0,21.0L348.0,17.2L349.0,17.2L349.0,14.5L350.0,14.5L350.0,18.4L351.0,18.4L351.0,18.4L352.0,18.4L352.0,15.5L353.0,15.5L353.0,4.0L354.0,4.0L354.0,11.8L355.0,11.8L355.0,10.0L356.0,10.0L356.0,12.0L357.0,12.0L357.0,11.2L358.0,11.2L358.0,19.5L359.0,19.5L359.0,20.3L360.0,20.3L360.0,19.1L361.0,19.1L361.0,18.6L362.0,18.6L362.0,20.4L363.0,20.4L363.0,14.8L364.0,14.8L364.0,18.9L365.0,18.9L365.0,17.6L366.0,17.6L366.0,20.8L367.0,20.8L367.0,19.2L368.0,19.2L368.0,18.2L369.0,18.2L369.0,21.8L370.0,21.8L370.0,24.2L371.0,24.2L371.0,23.5L372.0,23.5L372.0,23.7L373.0,23.7L373.0,18.1L374.0,18.1L374.0,25.7L375.0,25.7L375.0,28.7L376.0,28.7L376.0,31.0L377.0,31.0L377,31Z" fill="#62d39b"/><path d="M304,65L304.0,65.0L305.0,65.0L305.0,65.0L306.0,65.0L306.0,65.0L307.0,65.0L307.0,65.0L308.0,65.0L308.0,59.7L309.0,59.7L309.0,59.6L310.0,59.6L310.0,54.9L311.0,54.9L311.0,48.3L312.0,48.3L312.0,54.7L313.0,54.7L313.0,52.3L314.0,52.3L314.0,55.5L315.0,55.5L315.0,58.5L316.0,58.5L316.0,54.4L317.0,54.4L317.0,62.3L318.0,62.3L318.0,60.4L319.0,60.4L319.0,57.4L320.0,57.4L320.0,54.9L321.0,54.9L321.0,51.7L322.0,51.7L322.0,50.8L323.0,50.8L323.0,42.9L324.0,42.9L324.0,44.4L325.0,44.4L325.0,49.6L326.0,49.6L326.0,33.0L327.0,33.0L327.0,50.0L328.0,50.0L328.0,45.3L329.0,45.3L329.0,48.1L330.0,48.1L330.0,41.7L331.0,41.7L331.0,33.0L332.0,33.0L332.0,48.3L333.0,48.3L333.0,43.2L334.0,43.2L334.0,47.0L335.0,47.0L335.0,46.2L336.0,46.2L336.0,45.9L337.0,45.9L337.0,39.9L338.0,39.9L338.0,56.3L339.0,56.3L339.0,52.9L340.0,52.9L340.0,55.6L341.0,55.6L341.0,57.5L342.0,57.5L342.0,59.4L343.0,59.4L343.0,61.5L344.0,61.5L344.0,61.4L345.0,61.4L345.0,58.8L346.0,58.8L346.0,54.7L347.0,54.7L347.0,53.2L348.0,53.2L348.0,48.6L349.0,48.6L349.0,45.5L350.0,45.5L350.0,50.1L351.0,50.1L351.0,50.1L352.0,50.1L352.0,46.6L353.0,46.6L353.0,33.0L354.0,33.0L354.0,42.2L355.0,42.2L355.0,40.1L356.0,40.1L356.0,42.5L357.0,42.5L357.0,41.5L358.0,41.5L358.0,51.3L359.0,51.3L359.0,52.4L360.0,52.4L360.0,50.8L361.0,50.8L361.0,50.4L362.0,50.4L362.0,52.4L363.0,52.4L363.0,45.8L364.0,45.8L364.0,50.7L365.0,50.7L365.0,49.1L366.0,49.1L366.0,52.9L367.0,52.9L367.0,51.0L368.0,51.0L368.0,49.9L369.0,49.9L369.0,54.1L370.0,54.1L370.0,57.0L371.0,57.0L371.0,56.1L372.0,56.1L372.0,56.4L373.0,56.4L373.0,49.7L374.0,49.7L374.0,58.7L375.0,58.7L375.0,62.2L376.0,62.2L376.0,65.0L377.0,65.0L377,65Z" fill="#62d39b"/><rect x="302" y="30" width="77" height="4.5" fill="#6ad6a2"/><rect x="302" y="64" width="77" height="4" fill="#6ad6a2"/><rect x="303" y="27" width="75" height="1.6" fill="#e6f4ec"/><rect x="302" y="0" width="1" height="68" fill="#8ab89c"/><rect x="314" y="4" width="11" height="10" fill="#5e5e5e" stroke="#9a9a9a" stroke-width="1"/><text x="315.5" y="12.5" font-family="Liberation Sans" font-size="8" font-style="italic" fill="#333">fx</text></svg>
<div class="a" style="left:1386px;top:782px;width:2px;height:69px;background:#111;"></div>
<svg class="a" style="left:1021px;top:643px" width="14" height="14" viewBox="0 0 14 14"><path d="M1 1h12v7l-6 5.5L1 8z" fill="#4b8fe6"/></svg>
<div class="a" style="left:1027px;top:656px;width:2px;height:245px;background:#4b8fe6;"></div>
<div class="a" style="left:473px;top:902px;width:1086px;height:11px;background:#2a2a2a;border-radius:6px"></div>
<div class="a" style="left:473px;top:902px;width:282px;height:11px;background:#2e2e2e;border-radius:6px"></div>
<div class="a" style="left:473px;top:902px;width:11px;height:11px;background:#232323;border-radius:50%;border:2px solid #9a9a9a"></div>
<div class="a" style="left:745px;top:902px;width:11px;height:11px;background:#232323;border-radius:50%;border:2px solid #9a9a9a"></div>
<div class="a" style="left:1559px;top:661px;width:11px;height:117px;background:#2c2c2c;border-radius:6px"></div>
<div class="a" style="left:1559px;top:661px;width:11px;height:8px;background:#1b1b1b;border-radius:6px 6px 0 0"></div>
<div class="a" style="left:1559px;top:669px;width:11px;height:11px;background:#232323;border-radius:50%;border:2px solid #9a9a9a"></div>
<div class="a" style="left:1559px;top:765px;width:11px;height:11px;background:#232323;border-radius:50%;border:2px solid #9a9a9a"></div>
<div class="a" style="left:1559px;top:782px;width:11px;height:118px;background:#2c2c2c;border-radius:6px"></div>
<div class="a" style="left:1559px;top:891px;width:11px;height:9px;background:#1b1b1b;border-radius:0 0 6px 6px"></div>
<div class="a" style="left:1559px;top:783px;width:11px;height:11px;background:#232323;border-radius:50%;border:2px solid #9a9a9a"></div>
<div class="a" style="left:1559px;top:878px;width:11px;height:11px;background:#232323;border-radius:50%;border:2px solid #9a9a9a"></div>
<div class="a" style="left:1600px;top:610px;width:45px;height:281px;background:#1e1e1e;border:1px solid #2e2e2e"></div>
<div class="a" style="left:1601px;top:618px;width:43px;height:1px;background:#2e2e2e;"></div>
<div class="a" style="left:1622px;top:611px;width:1px;height:8px;background:#2e2e2e;"></div>
<div class="a" style="left:1602px;top:888px;width:19px;height:2px;background:#cfc54a;"></div>
<div class="a" style="left:1624px;top:888px;width:19px;height:2px;background:#cfc54a;"></div>
<div class="a t" style="left:1653px;top:617.5px;font-size:9.5px;color:#b0b0b0;">0</div>
<div class="a t" style="left:1653px;top:644.0px;font-size:9.5px;color:#b0b0b0;">-6</div>
<div class="a t" style="left:1653px;top:670.5px;font-size:9.5px;color:#b0b0b0;">-12</div>
<div class="a t" style="left:1653px;top:697.0px;font-size:9.5px;color:#b0b0b0;">-18</div>
<div class="a t" style="left:1653px;top:723.5px;font-size:9.5px;color:#b0b0b0;">-24</div>
<div class="a t" style="left:1653px;top:750.0px;font-size:9.5px;color:#b0b0b0;">-30</div>
<div class="a t" style="left:1653px;top:776.5px;font-size:9.5px;color:#b0b0b0;">-36</div>
<div class="a t" style="left:1653px;top:803.0px;font-size:9.5px;color:#b0b0b0;">-42</div>
<div class="a t" style="left:1653px;top:829.5px;font-size:9.5px;color:#b0b0b0;">-48</div>
<div class="a t" style="left:1653px;top:856.0px;font-size:9.5px;color:#b0b0b0;">-54</div>
<div class="a t" style="left:1653px;top:882.5px;font-size:9.5px;color:#b0b0b0;">dB</div>
<div class="a" style="left:1645px;top:621.5px;width:5px;height:1.2px;background:#8a8a8a;"></div>
<div class="a" style="left:1645px;top:625.9px;width:3px;height:1.2px;background:#8a8a8a;"></div>
<div class="a" style="left:1645px;top:630.3px;width:3px;height:1.2px;background:#8a8a8a;"></div>
<div class="a" style="left:1645px;top:634.8px;width:3px;height:1.2px;background:#8a8a8a;"></div>
<div class="a" style="left:1645px;top:639.2px;width:3px;height:1.2px;background:#8a8a8a;"></div>
<div class="a" style="left:1645px;top:643.6px;width:3px;height:1.2px;background:#8a8a8a;"></div>
<div class="a" style="left:1645px;top:648.0px;width:5px;height:1.2px;background:#8a8a8a;"></div>
<div class="a" style="left:1645px;top:652.4px;width:3px;height:1.2px;background:#8a8a8a;"></div>
<div class="a" style="left:1645px;top:656.8px;width:3px;height:1.2px;background:#8a8a8a;"></div>
<div class="a" style="left:1645px;top:661.2px;width:3px;height:1.2px;background:#8a8a8a;"></div>
<div class="a" style="left:1645px;top:665.7px;width:3px;height:1.2px;background:#8a8a8a;"></div>
<div class="a" style="left:1645px;top:670.1px;width:3px;height:1.2px;background:#8a8a8a;"></div>
<div class="a" style="left:1645px;top:674.5px;width:5px;height:1.2px;background:#8a8a8a;"></div>
<div class="a" style="left:1645px;top:678.9px;width:3px;height:1.2px;background:#8a8a8a;"></div>
<div class="a" style="left:1645px;top:683.3px;width:3px;height:1.2px;background:#8a8a8a;"></div>
<div class="a" style="left:1645px;top:687.8px;width:3px;height:1.2px;background:#8a8a8a;"></div>
<div class="a" style="left:1645px;top:692.2px;width:3px;height:1.2px;background:#8a8a8a;"></div>
<div class="a" style="left:1645px;top:696.6px;width:3px;height:1.2px;background:#8a8a8a;"></div>
<div class="a" style="left:1645px;top:701.0px;width:5px;height:1.2px;background:#8a8a8a;"></div>
<div class="a" style="left:1645px;top:705.4px;width:3px;height:1.2px;background:#8a8a8a;"></div>
<div class="a" style="left:1645px;top:709.8px;width:3px;height:1.2px;background:#8a8a8a;"></div>
<div class="a" style="left:1645px;top:714.2px;width:3px;height:1.2px;background:#8a8a8a;"></div>
<div class="a" style="left:1645px;top:718.7px;width:3px;height:1.2px;background:#8a8a8a;"></div>
<div class="a" style="left:1645px;top:723.1px;width:3px;height:1.2px;background:#8a8a8a;"></div>
<div class="a" style="left:1645px;top:727.5px;width:5px;height:1.2px;background:#8a8a8a;"></div>
<div class="a" style="left:1645px;top:731.9px;width:3px;height:1.2px;background:#8a8a8a;"></div>
<div class="a" style="left:1645px;top:736.3px;width:3px;height:1.2px;background:#8a8a8a;"></div>
<div class="a" style="left:1645px;top:740.8px;width:3px;height:1.2px;background:#8a8a8a;"></div>
<div class="a" style="left:1645px;top:745.2px;width:3px;height:1.2px;background:#8a8a8a;"></div>
<div class="a" style="left:1645px;top:749.6px;width:3px;height:1.2px;background:#8a8a8a;"></div>
<div class="a" style="left:1645px;top:754.0px;width:5px;height:1.2px;background:#8a8a8a;"></div>
<div class="a" style="left:1645px;top:758.4px;width:3px;height:1.2px;background:#8a8a8a;"></div>
<div class="a" style="left:1645px;top:762.8px;width:3px;height:1.2px;background:#8a8a8a;"></div>
<div class="a" style="left:1645px;top:767.2px;width:3px;height:1.2px;background:#8a8a8a;"></div>
<div class="a" style="left:1645px;top:771.7px;width:3px;height:1.2px;background:#8a8a8a;"></div>
<div class="a" style="left:1645px;top:776.1px;width:3px;height:1.2px;background:#8a8a8a;"></div>
<div class="a" style="left:1645px;top:780.5px;width:5px;height:1.2px;background:#8a8a8a;"></div>
<div class="a" style="left:1645px;top:784.9px;width:3px;height:1.2px;background:#8a8a8a;"></div>
<div class="a" style="left:1645px;top:789.3px;width:3px;height:1.2px;background:#8a8a8a;"></div>
<div class="a" style="left:1645px;top:793.8px;width:3px;height:1.2px;background:#8a8a8a;"></div>
<div class="a" style="left:1645px;top:798.2px;width:3px;height:1.2px;background:#8a8a8a;"></div>
<div class="a" style="left:1645px;top:802.6px;width:3px;height:1.2px;background:#8a8a8a;"></div>
<div class="a" style="left:1645px;top:807.0px;width:5px;height:1.2px;background:#8a8a8a;"></div>
<div class="a" style="left:1645px;top:811.4px;width:3px;height:1.2px;background:#8a8a8a;"></div>
<div class="a" style="left:1645px;top:815.8px;width:3px;height:1.2px;background:#8a8a8a;"></div>
<div class="a" style="left:1645px;top:820.2px;width:3px;height:1.2px;background:#8a8a8a;"></div>
<div class="a" style="left:1645px;top:824.7px;width:3px;height:1.2px;background:#8a8a8a;"></div>
<div class="a" style="left:1645px;top:829.1px;width:3px;height:1.2px;background:#8a8a8a;"></div>
<div class="a" style="left:1645px;top:833.5px;width:5px;height:1.2px;background:#8a8a8a;"></div>
<div class="a" style="left:1645px;top:837.9px;width:3px;height:1.2px;background:#8a8a8a;"></div>
<div class="a" style="left:1645px;top:842.3px;width:3px;height:1.2px;background:#8a8a8a;"></div>
<div class="a" style="left:1645px;top:846.8px;width:3px;height:1.2px;background:#8a8a8a;"></div>
<div class="a" style="left:1645px;top:851.2px;width:3px;height:1.2px;background:#8a8a8a;"></div>
<div class="a" style="left:1645px;top:855.6px;width:3px;height:1.2px;background:#8a8a8a;"></div>
<div class="a" style="left:1645px;top:860.0px;width:5px;height:1.2px;background:#8a8a8a;"></div>
<div class="a" style="left:1645px;top:864.4px;width:3px;height:1.2px;background:#8a8a8a;"></div>
<div class="a" style="left:1645px;top:868.8px;width:3px;height:1.2px;background:#8a8a8a;"></div>
<div class="a" style="left:1645px;top:873.2px;width:3px;height:1.2px;background:#8a8a8a;"></div>
<div class="a" style="left:1645px;top:877.7px;width:3px;height:1.2px;background:#8a8a8a;"></div>
<div class="a" style="left:1645px;top:882.1px;width:3px;height:1.2px;background:#8a8a8a;"></div>
<div class="a" style="left:1645px;top:886.5px;width:5px;height:1.2px;background:#8a8a8a;"></div>
<div class="a" style="left:1601px;top:896px;width:20px;height:17px;background:#1f1f1f;border:1px solid #2a2a2a"></div>
<div class="a" style="left:1624px;top:896px;width:20px;height:17px;background:#1f1f1f;border:1px solid #2a2a2a"></div>
<div class="a t" style="left:1607px;top:899px;font-size:11px;color:#b0b0b0;font-weight:bold">S</div>
<div class="a t" style="left:1630px;top:899px;font-size:11px;color:#b0b0b0;font-weight:bold">S</div></div></body></html>
